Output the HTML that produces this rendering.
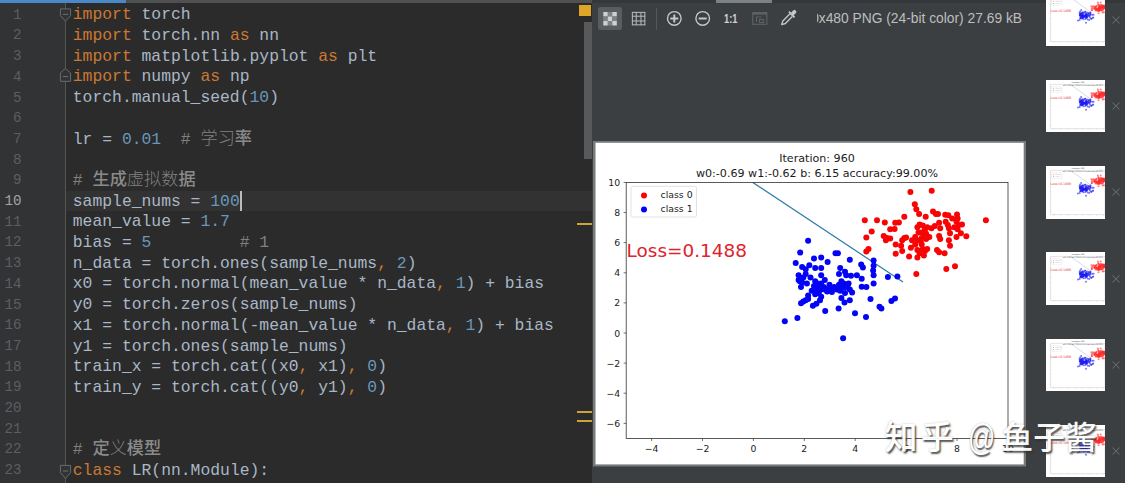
<!DOCTYPE html>
<html lang="zh"><head><meta charset="utf-8"><title>LR</title>
<style>
html,body{margin:0;padding:0;}
body{width:1125px;height:483px;overflow:hidden;background:#2b2b2b;position:relative;font-family:"Liberation Sans","Noto Sans CJK SC",sans-serif;}
#ed{position:absolute;left:0;top:0;width:593px;height:483px;background:#2b2b2b;overflow:hidden;}
#gut{position:absolute;left:0;top:0;width:65px;height:483px;background:#313335;}
#gutline{position:absolute;left:65px;top:0;width:1px;height:483px;background:#555555;}
#curline{position:absolute;left:66px;top:190.5px;width:527px;height:20.7px;background:#323232;}
#topbar{position:absolute;left:0;top:0;width:593px;height:3px;background:#4e5052;}
#topblue{position:absolute;left:0;top:0;width:126px;height:3px;background:#4a88c7;}
.ln{position:absolute;left:0;width:21.5px;text-align:right;font:14.2px/20px "Liberation Mono",monospace;color:#5c5f62;height:20px;white-space:pre;}
.ln.cur{color:#a4a3a3;}
.cl{position:absolute;left:72.8px;font:16.37px/20px "Liberation Mono","Noto Sans CJK SC",monospace;color:#a9b7c6;height:20px;white-space:pre;letter-spacing:0px;}
.k{color:#cc7832;} .n{color:#6897bb;} .c{color:#808080;} .t{color:#a9b7c6;}
.cj,.cjb{position:relative;top:0px;line-height:0;}
.cj{color:#808080;font-family:"Liberation Sans","Noto Sans CJK SC",sans-serif;font-size:17.2px;font-weight:300;}
.cjb{color:#8a8a8a;font-family:"Liberation Sans","Noto Sans CJK SC",sans-serif;font-size:17.2px;font-weight:500;}
#caret{position:absolute;left:239.6px;top:191px;width:2px;height:19.5px;background:#bbbbbb;}
#sb{position:absolute;left:583.6px;top:22px;width:8px;height:137px;background:#58595b;}
#ysq{position:absolute;left:579px;top:5.3px;width:11.8px;height:10.8px;background:#dfa526;}
.mk{position:absolute;left:577px;width:16px;height:2px;background:#c9a53a;}
#wm{position:absolute;left:0;top:0;width:1125px;height:483px;color:#fff;white-space:pre;text-shadow:1.5px 1.5px 1.6px rgba(50,50,50,0.85),0 0 2px rgba(80,80,80,0.35);opacity:0.95;pointer-events:none;font-family:"Liberation Sans","Noto Sans CJK SC",sans-serif;}
#wm span{position:absolute;line-height:44px;height:44px;}
.w1{left:884.5px;top:416.2px;font-weight:500;font-size:33px;letter-spacing:3.3px;}
.w2{left:956px;top:414px;font-size:31px;}
.w3{left:968.3px;top:415.6px;font-weight:400;font-size:36.5px;transform:scaleX(0.74);transform-origin:0 50%;}
.w4{left:1001.5px;top:416px;font-weight:500;font-size:31.7px;}
#panel{position:absolute;left:592px;top:0;width:533px;height:483px;background:#3c3f41;overflow:hidden;}
</style></head><body>
<div id="ed">
<div id="gut"></div><div id="gutline"></div><div id="curline"></div>
<svg width="14" height="483" viewBox="58 0 14 483" style="position:absolute;left:58px;top:0">
<g fill="#313335" stroke="#6a6c6e" stroke-width="1">
<path d="M60.4 8.9H70.6V15.6L65.5 21.2L60.4 15.6Z"/>
<path d="M65.5 68.4L70.6 73V81.3H60.4V73Z"/>
<path d="M60.4 465.4H70.6V472.6L65.5 478.4L60.4 472.6Z"/>
</g>
<path d="M62.8 14.3H68.2M62.8 76.6H68.2M62.8 471H68.2" stroke="#6f7173" stroke-width="1" fill="none"/>
</svg>
<div id="topbar"></div><div id="topblue"></div>
<div class="ln" style="top:4.70px">1</div>
<div class="cl" style="top:5.30px"><span class="k">import</span><span class="t"> torch</span></div>
<div class="ln" style="top:25.40px">2</div>
<div class="cl" style="top:26.00px"><span class="k">import</span><span class="t"> torch.nn </span><span class="k">as</span><span class="t"> nn</span></div>
<div class="ln" style="top:46.10px">3</div>
<div class="cl" style="top:46.70px"><span class="k">import</span><span class="t"> matplotlib.pyplot </span><span class="k">as</span><span class="t"> plt</span></div>
<div class="ln" style="top:66.80px">4</div>
<div class="cl" style="top:67.40px"><span class="k">import</span><span class="t"> numpy </span><span class="k">as</span><span class="t"> np</span></div>
<div class="ln" style="top:87.50px">5</div>
<div class="cl" style="top:88.10px"><span class="t">torch.manual_seed(</span><span class="n">10</span><span class="t">)</span></div>
<div class="ln" style="top:108.20px">6</div>
<div class="ln" style="top:128.90px">7</div>
<div class="cl" style="top:129.50px"><span class="t">lr = </span><span class="n">0.01</span><span class="t">  </span><span class="c"># </span><span class="cj">学习</span><span class="cjb">率</span></div>
<div class="ln" style="top:149.60px">8</div>
<div class="ln" style="top:170.30px">9</div>
<div class="cl" style="top:170.90px"><span class="c"># </span><span class="cjb">生成</span><span class="cj">虚拟数</span><span class="cjb">据</span></div>
<div class="ln cur" style="top:191.00px">10</div>
<div class="cl" style="top:191.60px"><span class="t">sample_nums = </span><span class="n">100</span></div>
<div class="ln" style="top:211.70px">11</div>
<div class="cl" style="top:212.30px"><span class="t">mean_value = </span><span class="n">1.7</span></div>
<div class="ln" style="top:232.40px">12</div>
<div class="cl" style="top:233.00px"><span class="t">bias = </span><span class="n">5</span><span class="t">         </span><span class="c"># 1</span></div>
<div class="ln" style="top:253.10px">13</div>
<div class="cl" style="top:253.70px"><span class="t">n_data = torch.ones(sample_nums</span><span class="k">,</span><span class="t"> </span><span class="n">2</span><span class="t">)</span></div>
<div class="ln" style="top:273.80px">14</div>
<div class="cl" style="top:274.40px"><span class="t">x0 = torch.normal(mean_value * n_data</span><span class="k">,</span><span class="t"> </span><span class="n">1</span><span class="t">) + bias</span></div>
<div class="ln" style="top:294.50px">15</div>
<div class="cl" style="top:295.10px"><span class="t">y0 = torch.zeros(sample_nums)</span></div>
<div class="ln" style="top:315.20px">16</div>
<div class="cl" style="top:315.80px"><span class="t">x1 = torch.normal(-mean_value * n_data</span><span class="k">,</span><span class="t"> </span><span class="n">1</span><span class="t">) + bias</span></div>
<div class="ln" style="top:335.90px">17</div>
<div class="cl" style="top:336.50px"><span class="t">y1 = torch.ones(sample_nums)</span></div>
<div class="ln" style="top:356.60px">18</div>
<div class="cl" style="top:357.20px"><span class="t">train_x = torch.cat((x0</span><span class="k">,</span><span class="t"> x1)</span><span class="k">,</span><span class="t"> </span><span class="n">0</span><span class="t">)</span></div>
<div class="ln" style="top:377.30px">19</div>
<div class="cl" style="top:377.90px"><span class="t">train_y = torch.cat((y0</span><span class="k">,</span><span class="t"> y1)</span><span class="k">,</span><span class="t"> </span><span class="n">0</span><span class="t">)</span></div>
<div class="ln" style="top:398.00px">20</div>
<div class="ln" style="top:418.70px">21</div>
<div class="ln" style="top:439.40px">22</div>
<div class="cl" style="top:440.00px"><span class="c"># </span><span class="cjb">定</span><span class="cj">义</span><span class="cjb">模型</span></div>
<div class="ln" style="top:460.10px">23</div>
<div class="cl" style="top:460.70px"><span class="k">class</span><span class="t"> LR(nn.Module):</span></div>
<div id="caret"></div>
<div id="sb"></div><div id="ysq"></div>
<div class="mk" style="top:223px"></div><div class="mk" style="top:410.7px"></div><div class="mk" style="top:420.2px"></div>
</div>
<div id="panel">
<div style="position:absolute;left:0;top:0;width:533px;height:3px;background:#35383a"></div>
<div style="position:absolute;left:123.5px;top:0;width:56px;height:3px;background:#7c8286"></div>
<div style="position:absolute;left:6.4px;top:7px;width:23.6px;height:23.3px;border-radius:2.5px;background:#5a5d60"></div>
<svg width="240" height="36" viewBox="592 0 240 36" style="position:absolute;left:0;top:0">
<rect x="603.30" y="12.00" width="4.50" height="4.50" fill="#cfd0d1"/>
<rect x="607.80" y="12.00" width="4.50" height="4.50" fill="#7f8284"/>
<rect x="612.30" y="12.00" width="4.50" height="4.50" fill="#cfd0d1"/>
<rect x="603.30" y="16.50" width="4.50" height="4.50" fill="#7f8284"/>
<rect x="607.80" y="16.50" width="4.50" height="4.50" fill="#cfd0d1"/>
<rect x="612.30" y="16.50" width="4.50" height="4.50" fill="#7f8284"/>
<rect x="603.30" y="21.00" width="4.50" height="4.50" fill="#cfd0d1"/>
<rect x="607.80" y="21.00" width="4.50" height="4.50" fill="#7f8284"/>
<rect x="612.30" y="21.00" width="4.50" height="4.50" fill="#cfd0d1"/>
<g stroke="#afb1b3" stroke-width="1.1" fill="none">
<line x1="632.40" y1="11.90" x2="632.40" y2="25.30"/>
<line x1="631.90" y1="12.40" x2="645.30" y2="12.40"/>
<line x1="636.24" y1="11.90" x2="636.24" y2="25.30"/>
<line x1="631.90" y1="16.24" x2="645.30" y2="16.24"/>
<line x1="640.96" y1="11.90" x2="640.96" y2="25.30"/>
<line x1="631.90" y1="20.96" x2="645.30" y2="20.96"/>
<line x1="644.80" y1="11.90" x2="644.80" y2="25.30"/>
<line x1="631.90" y1="24.80" x2="645.30" y2="24.80"/>
</g>
<rect x="656" y="8" width="1" height="22" fill="#56595b"/>
<g stroke="#c4c6c7" fill="none"><circle cx="674.3" cy="18.4" r="6.8" stroke-width="1.4"/><circle cx="702.7" cy="18.4" r="6.8" stroke-width="1.4"/>
<path d="M670.3 18.4H678.3M674.3 14.4V22.4M698.7 18.4H706.7" stroke-width="2"/></g>
<text x="730.7" y="23" font-family="'Liberation Sans',sans-serif" font-weight="bold" font-size="12.4" fill="#cfd0d1" text-anchor="middle" textLength="13.4" lengthAdjust="spacingAndGlyphs">1:1</text>
<g stroke="#5f6264" fill="none" stroke-width="1.1"><rect x="752.8" y="12.7" width="14" height="11.6"/><path d="M752.8 13.6H766.8" stroke-width="2"/><path d="M756.5 22V17H761.5M759.5 19.5H763.5V22.5H759.5Z"/></g>
<g transform="translate(788.5,17.8) rotate(45)" stroke="#c4c6c7" fill="#c4c6c7" stroke-linejoin="round"><rect x="-1.9" y="-10.2" width="3.8" height="5.2" rx="1.6" stroke="none"/><rect x="-4" y="-5.6" width="8" height="2" rx="0.4" stroke="none"/><path d="M-1.8 -3.6V6.2L0 9.6L1.8 6.2V-3.6" fill="none" stroke-width="1.4"/></g>
</svg>
<div style="position:absolute;left:225.2px;top:8px;width:220px;height:22px;overflow:hidden;white-space:pre;font:13.8px/22px 'Liberation Sans',sans-serif;color:#bcbec0"><span style="position:absolute;left:-6.07px;top:0">0x480 PNG (24-bit color) 27.69 kB</span></div>
<svg width="59.2" height="52.5" viewBox="0 0 59.2 52.5" style="position:absolute;left:453.8px;top:-6.6px;background:#fff" font-family="'DejaVu Sans','Liberation Sans',sans-serif">
<path d="M4.6 4.4H59V48.6H4.6Z" fill="none" stroke="#c8c8c8" stroke-width="0.5"/>
<path d="M8.0 48.6v1.2M15.1 48.6v1.2M22.2 48.6v1.2M29.3 48.6v1.2M36.4 48.6v1.2M43.5 48.6v1.2M50.6 48.6v1.2M57.7 48.6v1.2M4.6 6.0h-1M4.6 10.9h-1M4.6 15.8h-1M4.6 20.7h-1M4.6 25.6h-1M4.6 30.5h-1M4.6 35.4h-1M4.6 40.3h-1M4.6 45.2h-1" stroke="#cfcfcf" stroke-width="0.5" fill="none"/>
<path d="M24.5 4.4L46 20" stroke="#9fbccc" stroke-width="0.5"/>
<g fill="#ff2a2a" fill-opacity="0.6"><circle cx="51.8" cy="9.6" r="1.0"/><circle cx="54.7" cy="9.4" r="1.0"/><circle cx="52.4" cy="11.2" r="1.0"/><circle cx="52.6" cy="11.8" r="1.0"/><circle cx="53.0" cy="12.5" r="1.0"/><circle cx="53.9" cy="12.8" r="1.0"/><circle cx="54.9" cy="12.1" r="1.0"/><circle cx="55.6" cy="12.5" r="1.0"/><circle cx="56.6" cy="12.5" r="1.0"/><circle cx="57.0" cy="12.6" r="1.0"/><circle cx="58.2" cy="12.5" r="1.0"/><circle cx="58.3" cy="13.0" r="1.0"/><circle cx="62.2" cy="13.2" r="1.0"/><circle cx="45.4" cy="13.2" r="1.0"/><circle cx="47.1" cy="13.2" r="1.0"/><circle cx="48.2" cy="13.5" r="1.0"/><circle cx="49.7" cy="13.6" r="1.0"/><circle cx="50.2" cy="13.5" r="1.0"/><circle cx="50.9" cy="12.8" r="1.0"/><circle cx="46.4" cy="14.7" r="1.0"/><circle cx="45.7" cy="15.5" r="1.0"/><circle cx="49.0" cy="14.4" r="1.0"/><circle cx="49.6" cy="14.4" r="1.0"/><circle cx="48.1" cy="15.3" r="1.0"/><circle cx="48.5" cy="15.6" r="1.0"/><circle cx="49.0" cy="15.6" r="1.0"/><circle cx="48.4" cy="15.9" r="1.0"/><circle cx="50.9" cy="15.6" r="1.0"/><circle cx="50.6" cy="15.9" r="1.0"/><circle cx="51.2" cy="15.5" r="1.0"/><circle cx="49.7" cy="16.4" r="1.0"/><circle cx="50.5" cy="16.6" r="1.0"/><circle cx="49.7" cy="17.6" r="1.0"/><circle cx="50.6" cy="17.3" r="1.0"/><circle cx="51.6" cy="18.0" r="1.0"/><circle cx="51.8" cy="16.9" r="1.0"/><circle cx="52.4" cy="16.4" r="1.0"/><circle cx="52.7" cy="15.9" r="1.0"/><circle cx="52.4" cy="15.4" r="1.0"/><circle cx="52.9" cy="14.9" r="1.0"/><circle cx="52.7" cy="14.2" r="1.0"/><circle cx="53.0" cy="13.8" r="1.0"/><circle cx="53.5" cy="13.9" r="1.0"/><circle cx="53.8" cy="14.4" r="1.0"/><circle cx="53.9" cy="15.0" r="1.0"/><circle cx="53.6" cy="15.3" r="1.0"/><circle cx="53.3" cy="15.6" r="1.0"/><circle cx="53.9" cy="15.7" r="1.0"/><circle cx="54.4" cy="15.4" r="1.0"/><circle cx="54.1" cy="14.2" r="1.0"/><circle cx="54.7" cy="14.3" r="1.0"/><circle cx="55.1" cy="14.0" r="1.0"/><circle cx="55.7" cy="13.6" r="1.0"/><circle cx="55.9" cy="14.3" r="1.0"/><circle cx="55.7" cy="15.3" r="1.0"/><circle cx="55.9" cy="15.7" r="1.0"/><circle cx="56.6" cy="13.4" r="1.0"/><circle cx="56.9" cy="13.9" r="1.0"/><circle cx="57.1" cy="14.3" r="1.0"/><circle cx="57.2" cy="15.0" r="1.0"/><circle cx="57.1" cy="15.9" r="1.0"/><circle cx="57.2" cy="16.6" r="1.0"/><circle cx="58.1" cy="13.4" r="1.0"/><circle cx="58.4" cy="13.9" r="1.0"/><circle cx="58.9" cy="13.8" r="1.0"/><circle cx="58.3" cy="14.4" r="1.0"/><circle cx="58.7" cy="15.0" r="1.0"/><circle cx="58.1" cy="15.4" r="1.0"/><circle cx="59.5" cy="15.3" r="1.0"/><circle cx="55.4" cy="17.1" r="1.0"/><circle cx="55.7" cy="17.4" r="1.0"/><circle cx="56.5" cy="17.6" r="1.0"/><circle cx="53.3" cy="16.4" r="1.0"/><circle cx="53.5" cy="17.0" r="1.0"/><circle cx="53.8" cy="17.3" r="1.0"/><circle cx="54.1" cy="17.0" r="1.0"/><circle cx="52.7" cy="17.1" r="1.0"/><circle cx="53.0" cy="17.6" r="1.0"/><circle cx="52.7" cy="18.1" r="1.0"/><circle cx="53.6" cy="17.8" r="1.0"/><circle cx="52.6" cy="20.3" r="1.0"/><circle cx="56.7" cy="19.6" r="1.0"/><circle cx="57.9" cy="19.3" r="1.0"/><circle cx="46.0" cy="17.0" r="1.0"/><circle cx="45.7" cy="17.3" r="1.0"/><circle cx="57.5" cy="13.0" r="1.0"/><circle cx="57.8" cy="14.2" r="1.0"/><circle cx="55.3" cy="12.5" r="1.0"/><circle cx="53.3" cy="14.9" r="1.0"/><circle cx="53.2" cy="16.0" r="1.0"/><circle cx="52.0" cy="15.9" r="1.0"/></g>
<g fill="#1c1cf0" fill-opacity="0.6"><circle cx="35.2" cy="17.0" r="1.0"/><circle cx="34.1" cy="18.6" r="1.0"/><circle cx="33.5" cy="19.9" r="1.0"/><circle cx="36.0" cy="19.4" r="1.0"/><circle cx="37.0" cy="19.2" r="1.0"/><circle cx="37.9" cy="19.8" r="1.0"/><circle cx="39.0" cy="18.7" r="1.0"/><circle cx="39.3" cy="18.7" r="1.0"/><circle cx="41.0" cy="19.5" r="1.0"/><circle cx="42.5" cy="20.1" r="1.0"/><circle cx="42.8" cy="20.5" r="1.0"/><circle cx="44.3" cy="19.6" r="1.0"/><circle cx="44.3" cy="20.3" r="1.0"/><circle cx="44.2" cy="20.9" r="1.0"/><circle cx="44.3" cy="21.5" r="1.0"/><circle cx="46.2" cy="21.8" r="1.0"/><circle cx="47.6" cy="21.7" r="1.0"/><circle cx="34.4" cy="20.4" r="1.0"/><circle cx="34.9" cy="20.8" r="1.0"/><circle cx="35.4" cy="20.2" r="1.0"/><circle cx="36.2" cy="20.6" r="1.0"/><circle cx="37.0" cy="20.6" r="1.0"/><circle cx="33.9" cy="21.5" r="1.0"/><circle cx="34.9" cy="21.4" r="1.0"/><circle cx="37.0" cy="21.5" r="1.0"/><circle cx="39.6" cy="20.6" r="1.0"/><circle cx="40.3" cy="21.1" r="1.0"/><circle cx="39.5" cy="21.4" r="1.0"/><circle cx="40.5" cy="21.5" r="1.0"/><circle cx="41.1" cy="21.6" r="1.0"/><circle cx="42.0" cy="21.5" r="1.0"/><circle cx="42.6" cy="22.0" r="1.0"/><circle cx="33.9" cy="22.2" r="1.0"/><circle cx="34.4" cy="22.5" r="1.0"/><circle cx="35.0" cy="22.6" r="1.0"/><circle cx="34.2" cy="23.1" r="1.0"/><circle cx="36.2" cy="22.3" r="1.0"/><circle cx="36.0" cy="22.9" r="1.0"/><circle cx="36.5" cy="23.2" r="1.0"/><circle cx="37.0" cy="23.4" r="1.0"/><circle cx="36.7" cy="23.9" r="1.0"/><circle cx="37.3" cy="23.1" r="1.0"/><circle cx="38.2" cy="22.8" r="1.0"/><circle cx="38.3" cy="23.4" r="1.0"/><circle cx="37.8" cy="23.6" r="1.0"/><circle cx="39.5" cy="22.8" r="1.0"/><circle cx="39.8" cy="22.3" r="1.0"/><circle cx="40.1" cy="22.6" r="1.0"/><circle cx="40.8" cy="22.6" r="1.0"/><circle cx="40.5" cy="23.1" r="1.0"/><circle cx="39.8" cy="23.2" r="1.0"/><circle cx="41.0" cy="23.4" r="1.0"/><circle cx="41.3" cy="23.8" r="1.0"/><circle cx="40.3" cy="23.9" r="1.0"/><circle cx="39.8" cy="24.5" r="1.0"/><circle cx="42.6" cy="23.0" r="1.0"/><circle cx="43.3" cy="23.1" r="1.0"/><circle cx="44.3" cy="22.6" r="1.0"/><circle cx="35.2" cy="24.2" r="1.0"/><circle cx="37.0" cy="24.3" r="1.0"/><circle cx="36.8" cy="24.8" r="1.0"/><circle cx="36.4" cy="25.3" r="1.0"/><circle cx="35.9" cy="25.5" r="1.0"/><circle cx="34.9" cy="24.8" r="1.0"/><circle cx="34.2" cy="25.2" r="1.0"/><circle cx="40.2" cy="25.1" r="1.0"/><circle cx="41.0" cy="24.8" r="1.0"/><circle cx="43.8" cy="24.6" r="1.0"/><circle cx="46.7" cy="24.9" r="1.0"/><circle cx="47.2" cy="24.6" r="1.0"/><circle cx="45.1" cy="25.6" r="1.0"/><circle cx="45.3" cy="25.9" r="1.0"/><circle cx="37.6" cy="26.2" r="1.0"/><circle cx="39.4" cy="25.9" r="1.0"/><circle cx="41.7" cy="26.5" r="1.0"/><circle cx="43.2" cy="27.0" r="1.0"/><circle cx="33.7" cy="27.1" r="1.0"/><circle cx="32.0" cy="27.5" r="1.0"/><circle cx="40.0" cy="29.8" r="1.0"/><circle cx="38.8" cy="23.1" r="1.0"/><circle cx="39.2" cy="23.4" r="1.0"/><circle cx="35.5" cy="21.8" r="1.0"/><circle cx="37.5" cy="22.2" r="1.0"/><circle cx="38.5" cy="23.7" r="1.0"/><circle cx="37.0" cy="22.6" r="1.0"/><circle cx="34.5" cy="21.8" r="1.0"/><circle cx="35.7" cy="23.6" r="1.0"/><circle cx="36.2" cy="24.0" r="1.0"/><circle cx="36.5" cy="22.6" r="1.0"/><circle cx="36.8" cy="23.1" r="1.0"/><circle cx="36.4" cy="23.6" r="1.0"/><circle cx="37.5" cy="23.4" r="1.0"/><circle cx="38.0" cy="23.2" r="1.0"/><circle cx="39.8" cy="22.8" r="1.0"/><circle cx="40.1" cy="23.1" r="1.0"/><circle cx="40.6" cy="22.9" r="1.0"/><circle cx="39.6" cy="23.6" r="1.0"/><circle cx="34.0" cy="22.3" r="1.0"/><circle cx="35.2" cy="24.6" r="1.0"/><circle cx="34.5" cy="25.0" r="1.0"/></g>
<text x="32" y="3.3" font-size="1.9" fill="#333" text-anchor="middle">Iteration: 960</text>
<text x="37" y="5.6" font-size="1.9" fill="#333" text-anchor="middle" textLength="40">w0:-0.69 w1:-0.62 b: 6.15 accuracy:99.00%</text>
<text x="4.6" y="18.6" font-size="3.4" fill="#e84545" textLength="20.5">Loss=0.1488</text>
<rect x="5.6" y="6.9" width="10.4" height="5.4" rx="0.4" fill="none" stroke="#dedede" stroke-width="0.4"/>
<circle cx="7.6" cy="8.5" r="0.5" fill="#f88"/><circle cx="7.6" cy="10.6" r="0.5" fill="#88f"/>
<text x="9.5" y="9.1" font-size="1.6" fill="#999">class 0</text><text x="9.5" y="11.2" font-size="1.6" fill="#999">class 1</text>
</svg>
<svg width="10" height="10" viewBox="0 0 10 10" style="position:absolute;left:519.2px;top:14.7px"><path d="M1.5 1.5L8.5 8.5M8.5 1.5L1.5 8.5" stroke="#696c6e" stroke-width="1.05" fill="none"/></svg>
<svg width="59.2" height="52.5" viewBox="0 0 59.2 52.5" style="position:absolute;left:453.8px;top:79.7px;background:#fff" font-family="'DejaVu Sans','Liberation Sans',sans-serif">
<path d="M4.6 4.4H59V48.6H4.6Z" fill="none" stroke="#c8c8c8" stroke-width="0.5"/>
<path d="M8.0 48.6v1.2M15.1 48.6v1.2M22.2 48.6v1.2M29.3 48.6v1.2M36.4 48.6v1.2M43.5 48.6v1.2M50.6 48.6v1.2M57.7 48.6v1.2M4.6 6.0h-1M4.6 10.9h-1M4.6 15.8h-1M4.6 20.7h-1M4.6 25.6h-1M4.6 30.5h-1M4.6 35.4h-1M4.6 40.3h-1M4.6 45.2h-1" stroke="#cfcfcf" stroke-width="0.5" fill="none"/>
<path d="M24.5 4.4L46 20" stroke="#9fbccc" stroke-width="0.5"/>
<g fill="#ff2a2a" fill-opacity="0.6"><circle cx="51.8" cy="9.6" r="1.0"/><circle cx="54.7" cy="9.4" r="1.0"/><circle cx="52.4" cy="11.2" r="1.0"/><circle cx="52.6" cy="11.8" r="1.0"/><circle cx="53.0" cy="12.5" r="1.0"/><circle cx="53.9" cy="12.8" r="1.0"/><circle cx="54.9" cy="12.1" r="1.0"/><circle cx="55.6" cy="12.5" r="1.0"/><circle cx="56.6" cy="12.5" r="1.0"/><circle cx="57.0" cy="12.6" r="1.0"/><circle cx="58.2" cy="12.5" r="1.0"/><circle cx="58.3" cy="13.0" r="1.0"/><circle cx="62.2" cy="13.2" r="1.0"/><circle cx="45.4" cy="13.2" r="1.0"/><circle cx="47.1" cy="13.2" r="1.0"/><circle cx="48.2" cy="13.5" r="1.0"/><circle cx="49.7" cy="13.6" r="1.0"/><circle cx="50.2" cy="13.5" r="1.0"/><circle cx="50.9" cy="12.8" r="1.0"/><circle cx="46.4" cy="14.7" r="1.0"/><circle cx="45.7" cy="15.5" r="1.0"/><circle cx="49.0" cy="14.4" r="1.0"/><circle cx="49.6" cy="14.4" r="1.0"/><circle cx="48.1" cy="15.3" r="1.0"/><circle cx="48.5" cy="15.6" r="1.0"/><circle cx="49.0" cy="15.6" r="1.0"/><circle cx="48.4" cy="15.9" r="1.0"/><circle cx="50.9" cy="15.6" r="1.0"/><circle cx="50.6" cy="15.9" r="1.0"/><circle cx="51.2" cy="15.5" r="1.0"/><circle cx="49.7" cy="16.4" r="1.0"/><circle cx="50.5" cy="16.6" r="1.0"/><circle cx="49.7" cy="17.6" r="1.0"/><circle cx="50.6" cy="17.3" r="1.0"/><circle cx="51.6" cy="18.0" r="1.0"/><circle cx="51.8" cy="16.9" r="1.0"/><circle cx="52.4" cy="16.4" r="1.0"/><circle cx="52.7" cy="15.9" r="1.0"/><circle cx="52.4" cy="15.4" r="1.0"/><circle cx="52.9" cy="14.9" r="1.0"/><circle cx="52.7" cy="14.2" r="1.0"/><circle cx="53.0" cy="13.8" r="1.0"/><circle cx="53.5" cy="13.9" r="1.0"/><circle cx="53.8" cy="14.4" r="1.0"/><circle cx="53.9" cy="15.0" r="1.0"/><circle cx="53.6" cy="15.3" r="1.0"/><circle cx="53.3" cy="15.6" r="1.0"/><circle cx="53.9" cy="15.7" r="1.0"/><circle cx="54.4" cy="15.4" r="1.0"/><circle cx="54.1" cy="14.2" r="1.0"/><circle cx="54.7" cy="14.3" r="1.0"/><circle cx="55.1" cy="14.0" r="1.0"/><circle cx="55.7" cy="13.6" r="1.0"/><circle cx="55.9" cy="14.3" r="1.0"/><circle cx="55.7" cy="15.3" r="1.0"/><circle cx="55.9" cy="15.7" r="1.0"/><circle cx="56.6" cy="13.4" r="1.0"/><circle cx="56.9" cy="13.9" r="1.0"/><circle cx="57.1" cy="14.3" r="1.0"/><circle cx="57.2" cy="15.0" r="1.0"/><circle cx="57.1" cy="15.9" r="1.0"/><circle cx="57.2" cy="16.6" r="1.0"/><circle cx="58.1" cy="13.4" r="1.0"/><circle cx="58.4" cy="13.9" r="1.0"/><circle cx="58.9" cy="13.8" r="1.0"/><circle cx="58.3" cy="14.4" r="1.0"/><circle cx="58.7" cy="15.0" r="1.0"/><circle cx="58.1" cy="15.4" r="1.0"/><circle cx="59.5" cy="15.3" r="1.0"/><circle cx="55.4" cy="17.1" r="1.0"/><circle cx="55.7" cy="17.4" r="1.0"/><circle cx="56.5" cy="17.6" r="1.0"/><circle cx="53.3" cy="16.4" r="1.0"/><circle cx="53.5" cy="17.0" r="1.0"/><circle cx="53.8" cy="17.3" r="1.0"/><circle cx="54.1" cy="17.0" r="1.0"/><circle cx="52.7" cy="17.1" r="1.0"/><circle cx="53.0" cy="17.6" r="1.0"/><circle cx="52.7" cy="18.1" r="1.0"/><circle cx="53.6" cy="17.8" r="1.0"/><circle cx="52.6" cy="20.3" r="1.0"/><circle cx="56.7" cy="19.6" r="1.0"/><circle cx="57.9" cy="19.3" r="1.0"/><circle cx="46.0" cy="17.0" r="1.0"/><circle cx="45.7" cy="17.3" r="1.0"/><circle cx="57.5" cy="13.0" r="1.0"/><circle cx="57.8" cy="14.2" r="1.0"/><circle cx="55.3" cy="12.5" r="1.0"/><circle cx="53.3" cy="14.9" r="1.0"/><circle cx="53.2" cy="16.0" r="1.0"/><circle cx="52.0" cy="15.9" r="1.0"/></g>
<g fill="#1c1cf0" fill-opacity="0.6"><circle cx="35.2" cy="17.0" r="1.0"/><circle cx="34.1" cy="18.6" r="1.0"/><circle cx="33.5" cy="19.9" r="1.0"/><circle cx="36.0" cy="19.4" r="1.0"/><circle cx="37.0" cy="19.2" r="1.0"/><circle cx="37.9" cy="19.8" r="1.0"/><circle cx="39.0" cy="18.7" r="1.0"/><circle cx="39.3" cy="18.7" r="1.0"/><circle cx="41.0" cy="19.5" r="1.0"/><circle cx="42.5" cy="20.1" r="1.0"/><circle cx="42.8" cy="20.5" r="1.0"/><circle cx="44.3" cy="19.6" r="1.0"/><circle cx="44.3" cy="20.3" r="1.0"/><circle cx="44.2" cy="20.9" r="1.0"/><circle cx="44.3" cy="21.5" r="1.0"/><circle cx="46.2" cy="21.8" r="1.0"/><circle cx="47.6" cy="21.7" r="1.0"/><circle cx="34.4" cy="20.4" r="1.0"/><circle cx="34.9" cy="20.8" r="1.0"/><circle cx="35.4" cy="20.2" r="1.0"/><circle cx="36.2" cy="20.6" r="1.0"/><circle cx="37.0" cy="20.6" r="1.0"/><circle cx="33.9" cy="21.5" r="1.0"/><circle cx="34.9" cy="21.4" r="1.0"/><circle cx="37.0" cy="21.5" r="1.0"/><circle cx="39.6" cy="20.6" r="1.0"/><circle cx="40.3" cy="21.1" r="1.0"/><circle cx="39.5" cy="21.4" r="1.0"/><circle cx="40.5" cy="21.5" r="1.0"/><circle cx="41.1" cy="21.6" r="1.0"/><circle cx="42.0" cy="21.5" r="1.0"/><circle cx="42.6" cy="22.0" r="1.0"/><circle cx="33.9" cy="22.2" r="1.0"/><circle cx="34.4" cy="22.5" r="1.0"/><circle cx="35.0" cy="22.6" r="1.0"/><circle cx="34.2" cy="23.1" r="1.0"/><circle cx="36.2" cy="22.3" r="1.0"/><circle cx="36.0" cy="22.9" r="1.0"/><circle cx="36.5" cy="23.2" r="1.0"/><circle cx="37.0" cy="23.4" r="1.0"/><circle cx="36.7" cy="23.9" r="1.0"/><circle cx="37.3" cy="23.1" r="1.0"/><circle cx="38.2" cy="22.8" r="1.0"/><circle cx="38.3" cy="23.4" r="1.0"/><circle cx="37.8" cy="23.6" r="1.0"/><circle cx="39.5" cy="22.8" r="1.0"/><circle cx="39.8" cy="22.3" r="1.0"/><circle cx="40.1" cy="22.6" r="1.0"/><circle cx="40.8" cy="22.6" r="1.0"/><circle cx="40.5" cy="23.1" r="1.0"/><circle cx="39.8" cy="23.2" r="1.0"/><circle cx="41.0" cy="23.4" r="1.0"/><circle cx="41.3" cy="23.8" r="1.0"/><circle cx="40.3" cy="23.9" r="1.0"/><circle cx="39.8" cy="24.5" r="1.0"/><circle cx="42.6" cy="23.0" r="1.0"/><circle cx="43.3" cy="23.1" r="1.0"/><circle cx="44.3" cy="22.6" r="1.0"/><circle cx="35.2" cy="24.2" r="1.0"/><circle cx="37.0" cy="24.3" r="1.0"/><circle cx="36.8" cy="24.8" r="1.0"/><circle cx="36.4" cy="25.3" r="1.0"/><circle cx="35.9" cy="25.5" r="1.0"/><circle cx="34.9" cy="24.8" r="1.0"/><circle cx="34.2" cy="25.2" r="1.0"/><circle cx="40.2" cy="25.1" r="1.0"/><circle cx="41.0" cy="24.8" r="1.0"/><circle cx="43.8" cy="24.6" r="1.0"/><circle cx="46.7" cy="24.9" r="1.0"/><circle cx="47.2" cy="24.6" r="1.0"/><circle cx="45.1" cy="25.6" r="1.0"/><circle cx="45.3" cy="25.9" r="1.0"/><circle cx="37.6" cy="26.2" r="1.0"/><circle cx="39.4" cy="25.9" r="1.0"/><circle cx="41.7" cy="26.5" r="1.0"/><circle cx="43.2" cy="27.0" r="1.0"/><circle cx="33.7" cy="27.1" r="1.0"/><circle cx="32.0" cy="27.5" r="1.0"/><circle cx="40.0" cy="29.8" r="1.0"/><circle cx="38.8" cy="23.1" r="1.0"/><circle cx="39.2" cy="23.4" r="1.0"/><circle cx="35.5" cy="21.8" r="1.0"/><circle cx="37.5" cy="22.2" r="1.0"/><circle cx="38.5" cy="23.7" r="1.0"/><circle cx="37.0" cy="22.6" r="1.0"/><circle cx="34.5" cy="21.8" r="1.0"/><circle cx="35.7" cy="23.6" r="1.0"/><circle cx="36.2" cy="24.0" r="1.0"/><circle cx="36.5" cy="22.6" r="1.0"/><circle cx="36.8" cy="23.1" r="1.0"/><circle cx="36.4" cy="23.6" r="1.0"/><circle cx="37.5" cy="23.4" r="1.0"/><circle cx="38.0" cy="23.2" r="1.0"/><circle cx="39.8" cy="22.8" r="1.0"/><circle cx="40.1" cy="23.1" r="1.0"/><circle cx="40.6" cy="22.9" r="1.0"/><circle cx="39.6" cy="23.6" r="1.0"/><circle cx="34.0" cy="22.3" r="1.0"/><circle cx="35.2" cy="24.6" r="1.0"/><circle cx="34.5" cy="25.0" r="1.0"/></g>
<text x="32" y="3.3" font-size="1.9" fill="#333" text-anchor="middle">Iteration: 960</text>
<text x="37" y="5.6" font-size="1.9" fill="#333" text-anchor="middle" textLength="40">w0:-0.69 w1:-0.62 b: 6.15 accuracy:99.00%</text>
<text x="4.6" y="18.6" font-size="3.4" fill="#e84545" textLength="20.5">Loss=0.1488</text>
<rect x="5.6" y="6.9" width="10.4" height="5.4" rx="0.4" fill="none" stroke="#dedede" stroke-width="0.4"/>
<circle cx="7.6" cy="8.5" r="0.5" fill="#f88"/><circle cx="7.6" cy="10.6" r="0.5" fill="#88f"/>
<text x="9.5" y="9.1" font-size="1.6" fill="#999">class 0</text><text x="9.5" y="11.2" font-size="1.6" fill="#999">class 1</text>
</svg>
<svg width="10" height="10" viewBox="0 0 10 10" style="position:absolute;left:519.2px;top:101.0px"><path d="M1.5 1.5L8.5 8.5M8.5 1.5L1.5 8.5" stroke="#696c6e" stroke-width="1.05" fill="none"/></svg>
<svg width="59.2" height="52.5" viewBox="0 0 59.2 52.5" style="position:absolute;left:453.8px;top:166.0px;background:#fff" font-family="'DejaVu Sans','Liberation Sans',sans-serif">
<path d="M4.6 4.4H59V48.6H4.6Z" fill="none" stroke="#c8c8c8" stroke-width="0.5"/>
<path d="M8.0 48.6v1.2M15.1 48.6v1.2M22.2 48.6v1.2M29.3 48.6v1.2M36.4 48.6v1.2M43.5 48.6v1.2M50.6 48.6v1.2M57.7 48.6v1.2M4.6 6.0h-1M4.6 10.9h-1M4.6 15.8h-1M4.6 20.7h-1M4.6 25.6h-1M4.6 30.5h-1M4.6 35.4h-1M4.6 40.3h-1M4.6 45.2h-1" stroke="#cfcfcf" stroke-width="0.5" fill="none"/>
<path d="M24.5 4.4L46 20" stroke="#9fbccc" stroke-width="0.5"/>
<g fill="#ff2a2a" fill-opacity="0.6"><circle cx="51.8" cy="9.6" r="1.0"/><circle cx="54.7" cy="9.4" r="1.0"/><circle cx="52.4" cy="11.2" r="1.0"/><circle cx="52.6" cy="11.8" r="1.0"/><circle cx="53.0" cy="12.5" r="1.0"/><circle cx="53.9" cy="12.8" r="1.0"/><circle cx="54.9" cy="12.1" r="1.0"/><circle cx="55.6" cy="12.5" r="1.0"/><circle cx="56.6" cy="12.5" r="1.0"/><circle cx="57.0" cy="12.6" r="1.0"/><circle cx="58.2" cy="12.5" r="1.0"/><circle cx="58.3" cy="13.0" r="1.0"/><circle cx="62.2" cy="13.2" r="1.0"/><circle cx="45.4" cy="13.2" r="1.0"/><circle cx="47.1" cy="13.2" r="1.0"/><circle cx="48.2" cy="13.5" r="1.0"/><circle cx="49.7" cy="13.6" r="1.0"/><circle cx="50.2" cy="13.5" r="1.0"/><circle cx="50.9" cy="12.8" r="1.0"/><circle cx="46.4" cy="14.7" r="1.0"/><circle cx="45.7" cy="15.5" r="1.0"/><circle cx="49.0" cy="14.4" r="1.0"/><circle cx="49.6" cy="14.4" r="1.0"/><circle cx="48.1" cy="15.3" r="1.0"/><circle cx="48.5" cy="15.6" r="1.0"/><circle cx="49.0" cy="15.6" r="1.0"/><circle cx="48.4" cy="15.9" r="1.0"/><circle cx="50.9" cy="15.6" r="1.0"/><circle cx="50.6" cy="15.9" r="1.0"/><circle cx="51.2" cy="15.5" r="1.0"/><circle cx="49.7" cy="16.4" r="1.0"/><circle cx="50.5" cy="16.6" r="1.0"/><circle cx="49.7" cy="17.6" r="1.0"/><circle cx="50.6" cy="17.3" r="1.0"/><circle cx="51.6" cy="18.0" r="1.0"/><circle cx="51.8" cy="16.9" r="1.0"/><circle cx="52.4" cy="16.4" r="1.0"/><circle cx="52.7" cy="15.9" r="1.0"/><circle cx="52.4" cy="15.4" r="1.0"/><circle cx="52.9" cy="14.9" r="1.0"/><circle cx="52.7" cy="14.2" r="1.0"/><circle cx="53.0" cy="13.8" r="1.0"/><circle cx="53.5" cy="13.9" r="1.0"/><circle cx="53.8" cy="14.4" r="1.0"/><circle cx="53.9" cy="15.0" r="1.0"/><circle cx="53.6" cy="15.3" r="1.0"/><circle cx="53.3" cy="15.6" r="1.0"/><circle cx="53.9" cy="15.7" r="1.0"/><circle cx="54.4" cy="15.4" r="1.0"/><circle cx="54.1" cy="14.2" r="1.0"/><circle cx="54.7" cy="14.3" r="1.0"/><circle cx="55.1" cy="14.0" r="1.0"/><circle cx="55.7" cy="13.6" r="1.0"/><circle cx="55.9" cy="14.3" r="1.0"/><circle cx="55.7" cy="15.3" r="1.0"/><circle cx="55.9" cy="15.7" r="1.0"/><circle cx="56.6" cy="13.4" r="1.0"/><circle cx="56.9" cy="13.9" r="1.0"/><circle cx="57.1" cy="14.3" r="1.0"/><circle cx="57.2" cy="15.0" r="1.0"/><circle cx="57.1" cy="15.9" r="1.0"/><circle cx="57.2" cy="16.6" r="1.0"/><circle cx="58.1" cy="13.4" r="1.0"/><circle cx="58.4" cy="13.9" r="1.0"/><circle cx="58.9" cy="13.8" r="1.0"/><circle cx="58.3" cy="14.4" r="1.0"/><circle cx="58.7" cy="15.0" r="1.0"/><circle cx="58.1" cy="15.4" r="1.0"/><circle cx="59.5" cy="15.3" r="1.0"/><circle cx="55.4" cy="17.1" r="1.0"/><circle cx="55.7" cy="17.4" r="1.0"/><circle cx="56.5" cy="17.6" r="1.0"/><circle cx="53.3" cy="16.4" r="1.0"/><circle cx="53.5" cy="17.0" r="1.0"/><circle cx="53.8" cy="17.3" r="1.0"/><circle cx="54.1" cy="17.0" r="1.0"/><circle cx="52.7" cy="17.1" r="1.0"/><circle cx="53.0" cy="17.6" r="1.0"/><circle cx="52.7" cy="18.1" r="1.0"/><circle cx="53.6" cy="17.8" r="1.0"/><circle cx="52.6" cy="20.3" r="1.0"/><circle cx="56.7" cy="19.6" r="1.0"/><circle cx="57.9" cy="19.3" r="1.0"/><circle cx="46.0" cy="17.0" r="1.0"/><circle cx="45.7" cy="17.3" r="1.0"/><circle cx="57.5" cy="13.0" r="1.0"/><circle cx="57.8" cy="14.2" r="1.0"/><circle cx="55.3" cy="12.5" r="1.0"/><circle cx="53.3" cy="14.9" r="1.0"/><circle cx="53.2" cy="16.0" r="1.0"/><circle cx="52.0" cy="15.9" r="1.0"/></g>
<g fill="#1c1cf0" fill-opacity="0.6"><circle cx="35.2" cy="17.0" r="1.0"/><circle cx="34.1" cy="18.6" r="1.0"/><circle cx="33.5" cy="19.9" r="1.0"/><circle cx="36.0" cy="19.4" r="1.0"/><circle cx="37.0" cy="19.2" r="1.0"/><circle cx="37.9" cy="19.8" r="1.0"/><circle cx="39.0" cy="18.7" r="1.0"/><circle cx="39.3" cy="18.7" r="1.0"/><circle cx="41.0" cy="19.5" r="1.0"/><circle cx="42.5" cy="20.1" r="1.0"/><circle cx="42.8" cy="20.5" r="1.0"/><circle cx="44.3" cy="19.6" r="1.0"/><circle cx="44.3" cy="20.3" r="1.0"/><circle cx="44.2" cy="20.9" r="1.0"/><circle cx="44.3" cy="21.5" r="1.0"/><circle cx="46.2" cy="21.8" r="1.0"/><circle cx="47.6" cy="21.7" r="1.0"/><circle cx="34.4" cy="20.4" r="1.0"/><circle cx="34.9" cy="20.8" r="1.0"/><circle cx="35.4" cy="20.2" r="1.0"/><circle cx="36.2" cy="20.6" r="1.0"/><circle cx="37.0" cy="20.6" r="1.0"/><circle cx="33.9" cy="21.5" r="1.0"/><circle cx="34.9" cy="21.4" r="1.0"/><circle cx="37.0" cy="21.5" r="1.0"/><circle cx="39.6" cy="20.6" r="1.0"/><circle cx="40.3" cy="21.1" r="1.0"/><circle cx="39.5" cy="21.4" r="1.0"/><circle cx="40.5" cy="21.5" r="1.0"/><circle cx="41.1" cy="21.6" r="1.0"/><circle cx="42.0" cy="21.5" r="1.0"/><circle cx="42.6" cy="22.0" r="1.0"/><circle cx="33.9" cy="22.2" r="1.0"/><circle cx="34.4" cy="22.5" r="1.0"/><circle cx="35.0" cy="22.6" r="1.0"/><circle cx="34.2" cy="23.1" r="1.0"/><circle cx="36.2" cy="22.3" r="1.0"/><circle cx="36.0" cy="22.9" r="1.0"/><circle cx="36.5" cy="23.2" r="1.0"/><circle cx="37.0" cy="23.4" r="1.0"/><circle cx="36.7" cy="23.9" r="1.0"/><circle cx="37.3" cy="23.1" r="1.0"/><circle cx="38.2" cy="22.8" r="1.0"/><circle cx="38.3" cy="23.4" r="1.0"/><circle cx="37.8" cy="23.6" r="1.0"/><circle cx="39.5" cy="22.8" r="1.0"/><circle cx="39.8" cy="22.3" r="1.0"/><circle cx="40.1" cy="22.6" r="1.0"/><circle cx="40.8" cy="22.6" r="1.0"/><circle cx="40.5" cy="23.1" r="1.0"/><circle cx="39.8" cy="23.2" r="1.0"/><circle cx="41.0" cy="23.4" r="1.0"/><circle cx="41.3" cy="23.8" r="1.0"/><circle cx="40.3" cy="23.9" r="1.0"/><circle cx="39.8" cy="24.5" r="1.0"/><circle cx="42.6" cy="23.0" r="1.0"/><circle cx="43.3" cy="23.1" r="1.0"/><circle cx="44.3" cy="22.6" r="1.0"/><circle cx="35.2" cy="24.2" r="1.0"/><circle cx="37.0" cy="24.3" r="1.0"/><circle cx="36.8" cy="24.8" r="1.0"/><circle cx="36.4" cy="25.3" r="1.0"/><circle cx="35.9" cy="25.5" r="1.0"/><circle cx="34.9" cy="24.8" r="1.0"/><circle cx="34.2" cy="25.2" r="1.0"/><circle cx="40.2" cy="25.1" r="1.0"/><circle cx="41.0" cy="24.8" r="1.0"/><circle cx="43.8" cy="24.6" r="1.0"/><circle cx="46.7" cy="24.9" r="1.0"/><circle cx="47.2" cy="24.6" r="1.0"/><circle cx="45.1" cy="25.6" r="1.0"/><circle cx="45.3" cy="25.9" r="1.0"/><circle cx="37.6" cy="26.2" r="1.0"/><circle cx="39.4" cy="25.9" r="1.0"/><circle cx="41.7" cy="26.5" r="1.0"/><circle cx="43.2" cy="27.0" r="1.0"/><circle cx="33.7" cy="27.1" r="1.0"/><circle cx="32.0" cy="27.5" r="1.0"/><circle cx="40.0" cy="29.8" r="1.0"/><circle cx="38.8" cy="23.1" r="1.0"/><circle cx="39.2" cy="23.4" r="1.0"/><circle cx="35.5" cy="21.8" r="1.0"/><circle cx="37.5" cy="22.2" r="1.0"/><circle cx="38.5" cy="23.7" r="1.0"/><circle cx="37.0" cy="22.6" r="1.0"/><circle cx="34.5" cy="21.8" r="1.0"/><circle cx="35.7" cy="23.6" r="1.0"/><circle cx="36.2" cy="24.0" r="1.0"/><circle cx="36.5" cy="22.6" r="1.0"/><circle cx="36.8" cy="23.1" r="1.0"/><circle cx="36.4" cy="23.6" r="1.0"/><circle cx="37.5" cy="23.4" r="1.0"/><circle cx="38.0" cy="23.2" r="1.0"/><circle cx="39.8" cy="22.8" r="1.0"/><circle cx="40.1" cy="23.1" r="1.0"/><circle cx="40.6" cy="22.9" r="1.0"/><circle cx="39.6" cy="23.6" r="1.0"/><circle cx="34.0" cy="22.3" r="1.0"/><circle cx="35.2" cy="24.6" r="1.0"/><circle cx="34.5" cy="25.0" r="1.0"/></g>
<text x="32" y="3.3" font-size="1.9" fill="#333" text-anchor="middle">Iteration: 960</text>
<text x="37" y="5.6" font-size="1.9" fill="#333" text-anchor="middle" textLength="40">w0:-0.69 w1:-0.62 b: 6.15 accuracy:99.00%</text>
<text x="4.6" y="18.6" font-size="3.4" fill="#e84545" textLength="20.5">Loss=0.1488</text>
<rect x="5.6" y="6.9" width="10.4" height="5.4" rx="0.4" fill="none" stroke="#dedede" stroke-width="0.4"/>
<circle cx="7.6" cy="8.5" r="0.5" fill="#f88"/><circle cx="7.6" cy="10.6" r="0.5" fill="#88f"/>
<text x="9.5" y="9.1" font-size="1.6" fill="#999">class 0</text><text x="9.5" y="11.2" font-size="1.6" fill="#999">class 1</text>
</svg>
<svg width="10" height="10" viewBox="0 0 10 10" style="position:absolute;left:519.2px;top:187.2px"><path d="M1.5 1.5L8.5 8.5M8.5 1.5L1.5 8.5" stroke="#696c6e" stroke-width="1.05" fill="none"/></svg>
<svg width="59.2" height="52.5" viewBox="0 0 59.2 52.5" style="position:absolute;left:453.8px;top:252.3px;background:#fff" font-family="'DejaVu Sans','Liberation Sans',sans-serif">
<path d="M4.6 4.4H59V48.6H4.6Z" fill="none" stroke="#c8c8c8" stroke-width="0.5"/>
<path d="M8.0 48.6v1.2M15.1 48.6v1.2M22.2 48.6v1.2M29.3 48.6v1.2M36.4 48.6v1.2M43.5 48.6v1.2M50.6 48.6v1.2M57.7 48.6v1.2M4.6 6.0h-1M4.6 10.9h-1M4.6 15.8h-1M4.6 20.7h-1M4.6 25.6h-1M4.6 30.5h-1M4.6 35.4h-1M4.6 40.3h-1M4.6 45.2h-1" stroke="#cfcfcf" stroke-width="0.5" fill="none"/>
<path d="M24.5 4.4L46 20" stroke="#9fbccc" stroke-width="0.5"/>
<g fill="#ff2a2a" fill-opacity="0.6"><circle cx="51.8" cy="9.6" r="1.0"/><circle cx="54.7" cy="9.4" r="1.0"/><circle cx="52.4" cy="11.2" r="1.0"/><circle cx="52.6" cy="11.8" r="1.0"/><circle cx="53.0" cy="12.5" r="1.0"/><circle cx="53.9" cy="12.8" r="1.0"/><circle cx="54.9" cy="12.1" r="1.0"/><circle cx="55.6" cy="12.5" r="1.0"/><circle cx="56.6" cy="12.5" r="1.0"/><circle cx="57.0" cy="12.6" r="1.0"/><circle cx="58.2" cy="12.5" r="1.0"/><circle cx="58.3" cy="13.0" r="1.0"/><circle cx="62.2" cy="13.2" r="1.0"/><circle cx="45.4" cy="13.2" r="1.0"/><circle cx="47.1" cy="13.2" r="1.0"/><circle cx="48.2" cy="13.5" r="1.0"/><circle cx="49.7" cy="13.6" r="1.0"/><circle cx="50.2" cy="13.5" r="1.0"/><circle cx="50.9" cy="12.8" r="1.0"/><circle cx="46.4" cy="14.7" r="1.0"/><circle cx="45.7" cy="15.5" r="1.0"/><circle cx="49.0" cy="14.4" r="1.0"/><circle cx="49.6" cy="14.4" r="1.0"/><circle cx="48.1" cy="15.3" r="1.0"/><circle cx="48.5" cy="15.6" r="1.0"/><circle cx="49.0" cy="15.6" r="1.0"/><circle cx="48.4" cy="15.9" r="1.0"/><circle cx="50.9" cy="15.6" r="1.0"/><circle cx="50.6" cy="15.9" r="1.0"/><circle cx="51.2" cy="15.5" r="1.0"/><circle cx="49.7" cy="16.4" r="1.0"/><circle cx="50.5" cy="16.6" r="1.0"/><circle cx="49.7" cy="17.6" r="1.0"/><circle cx="50.6" cy="17.3" r="1.0"/><circle cx="51.6" cy="18.0" r="1.0"/><circle cx="51.8" cy="16.9" r="1.0"/><circle cx="52.4" cy="16.4" r="1.0"/><circle cx="52.7" cy="15.9" r="1.0"/><circle cx="52.4" cy="15.4" r="1.0"/><circle cx="52.9" cy="14.9" r="1.0"/><circle cx="52.7" cy="14.2" r="1.0"/><circle cx="53.0" cy="13.8" r="1.0"/><circle cx="53.5" cy="13.9" r="1.0"/><circle cx="53.8" cy="14.4" r="1.0"/><circle cx="53.9" cy="15.0" r="1.0"/><circle cx="53.6" cy="15.3" r="1.0"/><circle cx="53.3" cy="15.6" r="1.0"/><circle cx="53.9" cy="15.7" r="1.0"/><circle cx="54.4" cy="15.4" r="1.0"/><circle cx="54.1" cy="14.2" r="1.0"/><circle cx="54.7" cy="14.3" r="1.0"/><circle cx="55.1" cy="14.0" r="1.0"/><circle cx="55.7" cy="13.6" r="1.0"/><circle cx="55.9" cy="14.3" r="1.0"/><circle cx="55.7" cy="15.3" r="1.0"/><circle cx="55.9" cy="15.7" r="1.0"/><circle cx="56.6" cy="13.4" r="1.0"/><circle cx="56.9" cy="13.9" r="1.0"/><circle cx="57.1" cy="14.3" r="1.0"/><circle cx="57.2" cy="15.0" r="1.0"/><circle cx="57.1" cy="15.9" r="1.0"/><circle cx="57.2" cy="16.6" r="1.0"/><circle cx="58.1" cy="13.4" r="1.0"/><circle cx="58.4" cy="13.9" r="1.0"/><circle cx="58.9" cy="13.8" r="1.0"/><circle cx="58.3" cy="14.4" r="1.0"/><circle cx="58.7" cy="15.0" r="1.0"/><circle cx="58.1" cy="15.4" r="1.0"/><circle cx="59.5" cy="15.3" r="1.0"/><circle cx="55.4" cy="17.1" r="1.0"/><circle cx="55.7" cy="17.4" r="1.0"/><circle cx="56.5" cy="17.6" r="1.0"/><circle cx="53.3" cy="16.4" r="1.0"/><circle cx="53.5" cy="17.0" r="1.0"/><circle cx="53.8" cy="17.3" r="1.0"/><circle cx="54.1" cy="17.0" r="1.0"/><circle cx="52.7" cy="17.1" r="1.0"/><circle cx="53.0" cy="17.6" r="1.0"/><circle cx="52.7" cy="18.1" r="1.0"/><circle cx="53.6" cy="17.8" r="1.0"/><circle cx="52.6" cy="20.3" r="1.0"/><circle cx="56.7" cy="19.6" r="1.0"/><circle cx="57.9" cy="19.3" r="1.0"/><circle cx="46.0" cy="17.0" r="1.0"/><circle cx="45.7" cy="17.3" r="1.0"/><circle cx="57.5" cy="13.0" r="1.0"/><circle cx="57.8" cy="14.2" r="1.0"/><circle cx="55.3" cy="12.5" r="1.0"/><circle cx="53.3" cy="14.9" r="1.0"/><circle cx="53.2" cy="16.0" r="1.0"/><circle cx="52.0" cy="15.9" r="1.0"/></g>
<g fill="#1c1cf0" fill-opacity="0.6"><circle cx="35.2" cy="17.0" r="1.0"/><circle cx="34.1" cy="18.6" r="1.0"/><circle cx="33.5" cy="19.9" r="1.0"/><circle cx="36.0" cy="19.4" r="1.0"/><circle cx="37.0" cy="19.2" r="1.0"/><circle cx="37.9" cy="19.8" r="1.0"/><circle cx="39.0" cy="18.7" r="1.0"/><circle cx="39.3" cy="18.7" r="1.0"/><circle cx="41.0" cy="19.5" r="1.0"/><circle cx="42.5" cy="20.1" r="1.0"/><circle cx="42.8" cy="20.5" r="1.0"/><circle cx="44.3" cy="19.6" r="1.0"/><circle cx="44.3" cy="20.3" r="1.0"/><circle cx="44.2" cy="20.9" r="1.0"/><circle cx="44.3" cy="21.5" r="1.0"/><circle cx="46.2" cy="21.8" r="1.0"/><circle cx="47.6" cy="21.7" r="1.0"/><circle cx="34.4" cy="20.4" r="1.0"/><circle cx="34.9" cy="20.8" r="1.0"/><circle cx="35.4" cy="20.2" r="1.0"/><circle cx="36.2" cy="20.6" r="1.0"/><circle cx="37.0" cy="20.6" r="1.0"/><circle cx="33.9" cy="21.5" r="1.0"/><circle cx="34.9" cy="21.4" r="1.0"/><circle cx="37.0" cy="21.5" r="1.0"/><circle cx="39.6" cy="20.6" r="1.0"/><circle cx="40.3" cy="21.1" r="1.0"/><circle cx="39.5" cy="21.4" r="1.0"/><circle cx="40.5" cy="21.5" r="1.0"/><circle cx="41.1" cy="21.6" r="1.0"/><circle cx="42.0" cy="21.5" r="1.0"/><circle cx="42.6" cy="22.0" r="1.0"/><circle cx="33.9" cy="22.2" r="1.0"/><circle cx="34.4" cy="22.5" r="1.0"/><circle cx="35.0" cy="22.6" r="1.0"/><circle cx="34.2" cy="23.1" r="1.0"/><circle cx="36.2" cy="22.3" r="1.0"/><circle cx="36.0" cy="22.9" r="1.0"/><circle cx="36.5" cy="23.2" r="1.0"/><circle cx="37.0" cy="23.4" r="1.0"/><circle cx="36.7" cy="23.9" r="1.0"/><circle cx="37.3" cy="23.1" r="1.0"/><circle cx="38.2" cy="22.8" r="1.0"/><circle cx="38.3" cy="23.4" r="1.0"/><circle cx="37.8" cy="23.6" r="1.0"/><circle cx="39.5" cy="22.8" r="1.0"/><circle cx="39.8" cy="22.3" r="1.0"/><circle cx="40.1" cy="22.6" r="1.0"/><circle cx="40.8" cy="22.6" r="1.0"/><circle cx="40.5" cy="23.1" r="1.0"/><circle cx="39.8" cy="23.2" r="1.0"/><circle cx="41.0" cy="23.4" r="1.0"/><circle cx="41.3" cy="23.8" r="1.0"/><circle cx="40.3" cy="23.9" r="1.0"/><circle cx="39.8" cy="24.5" r="1.0"/><circle cx="42.6" cy="23.0" r="1.0"/><circle cx="43.3" cy="23.1" r="1.0"/><circle cx="44.3" cy="22.6" r="1.0"/><circle cx="35.2" cy="24.2" r="1.0"/><circle cx="37.0" cy="24.3" r="1.0"/><circle cx="36.8" cy="24.8" r="1.0"/><circle cx="36.4" cy="25.3" r="1.0"/><circle cx="35.9" cy="25.5" r="1.0"/><circle cx="34.9" cy="24.8" r="1.0"/><circle cx="34.2" cy="25.2" r="1.0"/><circle cx="40.2" cy="25.1" r="1.0"/><circle cx="41.0" cy="24.8" r="1.0"/><circle cx="43.8" cy="24.6" r="1.0"/><circle cx="46.7" cy="24.9" r="1.0"/><circle cx="47.2" cy="24.6" r="1.0"/><circle cx="45.1" cy="25.6" r="1.0"/><circle cx="45.3" cy="25.9" r="1.0"/><circle cx="37.6" cy="26.2" r="1.0"/><circle cx="39.4" cy="25.9" r="1.0"/><circle cx="41.7" cy="26.5" r="1.0"/><circle cx="43.2" cy="27.0" r="1.0"/><circle cx="33.7" cy="27.1" r="1.0"/><circle cx="32.0" cy="27.5" r="1.0"/><circle cx="40.0" cy="29.8" r="1.0"/><circle cx="38.8" cy="23.1" r="1.0"/><circle cx="39.2" cy="23.4" r="1.0"/><circle cx="35.5" cy="21.8" r="1.0"/><circle cx="37.5" cy="22.2" r="1.0"/><circle cx="38.5" cy="23.7" r="1.0"/><circle cx="37.0" cy="22.6" r="1.0"/><circle cx="34.5" cy="21.8" r="1.0"/><circle cx="35.7" cy="23.6" r="1.0"/><circle cx="36.2" cy="24.0" r="1.0"/><circle cx="36.5" cy="22.6" r="1.0"/><circle cx="36.8" cy="23.1" r="1.0"/><circle cx="36.4" cy="23.6" r="1.0"/><circle cx="37.5" cy="23.4" r="1.0"/><circle cx="38.0" cy="23.2" r="1.0"/><circle cx="39.8" cy="22.8" r="1.0"/><circle cx="40.1" cy="23.1" r="1.0"/><circle cx="40.6" cy="22.9" r="1.0"/><circle cx="39.6" cy="23.6" r="1.0"/><circle cx="34.0" cy="22.3" r="1.0"/><circle cx="35.2" cy="24.6" r="1.0"/><circle cx="34.5" cy="25.0" r="1.0"/></g>
<text x="32" y="3.3" font-size="1.9" fill="#333" text-anchor="middle">Iteration: 960</text>
<text x="37" y="5.6" font-size="1.9" fill="#333" text-anchor="middle" textLength="40">w0:-0.69 w1:-0.62 b: 6.15 accuracy:99.00%</text>
<text x="4.6" y="18.6" font-size="3.4" fill="#e84545" textLength="20.5">Loss=0.1488</text>
<rect x="5.6" y="6.9" width="10.4" height="5.4" rx="0.4" fill="none" stroke="#dedede" stroke-width="0.4"/>
<circle cx="7.6" cy="8.5" r="0.5" fill="#f88"/><circle cx="7.6" cy="10.6" r="0.5" fill="#88f"/>
<text x="9.5" y="9.1" font-size="1.6" fill="#999">class 0</text><text x="9.5" y="11.2" font-size="1.6" fill="#999">class 1</text>
</svg>
<svg width="10" height="10" viewBox="0 0 10 10" style="position:absolute;left:519.2px;top:273.6px"><path d="M1.5 1.5L8.5 8.5M8.5 1.5L1.5 8.5" stroke="#696c6e" stroke-width="1.05" fill="none"/></svg>
<svg width="59.2" height="52.5" viewBox="0 0 59.2 52.5" style="position:absolute;left:453.8px;top:338.6px;background:#fff" font-family="'DejaVu Sans','Liberation Sans',sans-serif">
<path d="M4.6 4.4H59V48.6H4.6Z" fill="none" stroke="#c8c8c8" stroke-width="0.5"/>
<path d="M8.0 48.6v1.2M15.1 48.6v1.2M22.2 48.6v1.2M29.3 48.6v1.2M36.4 48.6v1.2M43.5 48.6v1.2M50.6 48.6v1.2M57.7 48.6v1.2M4.6 6.0h-1M4.6 10.9h-1M4.6 15.8h-1M4.6 20.7h-1M4.6 25.6h-1M4.6 30.5h-1M4.6 35.4h-1M4.6 40.3h-1M4.6 45.2h-1" stroke="#cfcfcf" stroke-width="0.5" fill="none"/>
<path d="M24.5 4.4L46 20" stroke="#9fbccc" stroke-width="0.5"/>
<g fill="#ff2a2a" fill-opacity="0.6"><circle cx="51.8" cy="9.6" r="1.0"/><circle cx="54.7" cy="9.4" r="1.0"/><circle cx="52.4" cy="11.2" r="1.0"/><circle cx="52.6" cy="11.8" r="1.0"/><circle cx="53.0" cy="12.5" r="1.0"/><circle cx="53.9" cy="12.8" r="1.0"/><circle cx="54.9" cy="12.1" r="1.0"/><circle cx="55.6" cy="12.5" r="1.0"/><circle cx="56.6" cy="12.5" r="1.0"/><circle cx="57.0" cy="12.6" r="1.0"/><circle cx="58.2" cy="12.5" r="1.0"/><circle cx="58.3" cy="13.0" r="1.0"/><circle cx="62.2" cy="13.2" r="1.0"/><circle cx="45.4" cy="13.2" r="1.0"/><circle cx="47.1" cy="13.2" r="1.0"/><circle cx="48.2" cy="13.5" r="1.0"/><circle cx="49.7" cy="13.6" r="1.0"/><circle cx="50.2" cy="13.5" r="1.0"/><circle cx="50.9" cy="12.8" r="1.0"/><circle cx="46.4" cy="14.7" r="1.0"/><circle cx="45.7" cy="15.5" r="1.0"/><circle cx="49.0" cy="14.4" r="1.0"/><circle cx="49.6" cy="14.4" r="1.0"/><circle cx="48.1" cy="15.3" r="1.0"/><circle cx="48.5" cy="15.6" r="1.0"/><circle cx="49.0" cy="15.6" r="1.0"/><circle cx="48.4" cy="15.9" r="1.0"/><circle cx="50.9" cy="15.6" r="1.0"/><circle cx="50.6" cy="15.9" r="1.0"/><circle cx="51.2" cy="15.5" r="1.0"/><circle cx="49.7" cy="16.4" r="1.0"/><circle cx="50.5" cy="16.6" r="1.0"/><circle cx="49.7" cy="17.6" r="1.0"/><circle cx="50.6" cy="17.3" r="1.0"/><circle cx="51.6" cy="18.0" r="1.0"/><circle cx="51.8" cy="16.9" r="1.0"/><circle cx="52.4" cy="16.4" r="1.0"/><circle cx="52.7" cy="15.9" r="1.0"/><circle cx="52.4" cy="15.4" r="1.0"/><circle cx="52.9" cy="14.9" r="1.0"/><circle cx="52.7" cy="14.2" r="1.0"/><circle cx="53.0" cy="13.8" r="1.0"/><circle cx="53.5" cy="13.9" r="1.0"/><circle cx="53.8" cy="14.4" r="1.0"/><circle cx="53.9" cy="15.0" r="1.0"/><circle cx="53.6" cy="15.3" r="1.0"/><circle cx="53.3" cy="15.6" r="1.0"/><circle cx="53.9" cy="15.7" r="1.0"/><circle cx="54.4" cy="15.4" r="1.0"/><circle cx="54.1" cy="14.2" r="1.0"/><circle cx="54.7" cy="14.3" r="1.0"/><circle cx="55.1" cy="14.0" r="1.0"/><circle cx="55.7" cy="13.6" r="1.0"/><circle cx="55.9" cy="14.3" r="1.0"/><circle cx="55.7" cy="15.3" r="1.0"/><circle cx="55.9" cy="15.7" r="1.0"/><circle cx="56.6" cy="13.4" r="1.0"/><circle cx="56.9" cy="13.9" r="1.0"/><circle cx="57.1" cy="14.3" r="1.0"/><circle cx="57.2" cy="15.0" r="1.0"/><circle cx="57.1" cy="15.9" r="1.0"/><circle cx="57.2" cy="16.6" r="1.0"/><circle cx="58.1" cy="13.4" r="1.0"/><circle cx="58.4" cy="13.9" r="1.0"/><circle cx="58.9" cy="13.8" r="1.0"/><circle cx="58.3" cy="14.4" r="1.0"/><circle cx="58.7" cy="15.0" r="1.0"/><circle cx="58.1" cy="15.4" r="1.0"/><circle cx="59.5" cy="15.3" r="1.0"/><circle cx="55.4" cy="17.1" r="1.0"/><circle cx="55.7" cy="17.4" r="1.0"/><circle cx="56.5" cy="17.6" r="1.0"/><circle cx="53.3" cy="16.4" r="1.0"/><circle cx="53.5" cy="17.0" r="1.0"/><circle cx="53.8" cy="17.3" r="1.0"/><circle cx="54.1" cy="17.0" r="1.0"/><circle cx="52.7" cy="17.1" r="1.0"/><circle cx="53.0" cy="17.6" r="1.0"/><circle cx="52.7" cy="18.1" r="1.0"/><circle cx="53.6" cy="17.8" r="1.0"/><circle cx="52.6" cy="20.3" r="1.0"/><circle cx="56.7" cy="19.6" r="1.0"/><circle cx="57.9" cy="19.3" r="1.0"/><circle cx="46.0" cy="17.0" r="1.0"/><circle cx="45.7" cy="17.3" r="1.0"/><circle cx="57.5" cy="13.0" r="1.0"/><circle cx="57.8" cy="14.2" r="1.0"/><circle cx="55.3" cy="12.5" r="1.0"/><circle cx="53.3" cy="14.9" r="1.0"/><circle cx="53.2" cy="16.0" r="1.0"/><circle cx="52.0" cy="15.9" r="1.0"/></g>
<g fill="#1c1cf0" fill-opacity="0.6"><circle cx="35.2" cy="17.0" r="1.0"/><circle cx="34.1" cy="18.6" r="1.0"/><circle cx="33.5" cy="19.9" r="1.0"/><circle cx="36.0" cy="19.4" r="1.0"/><circle cx="37.0" cy="19.2" r="1.0"/><circle cx="37.9" cy="19.8" r="1.0"/><circle cx="39.0" cy="18.7" r="1.0"/><circle cx="39.3" cy="18.7" r="1.0"/><circle cx="41.0" cy="19.5" r="1.0"/><circle cx="42.5" cy="20.1" r="1.0"/><circle cx="42.8" cy="20.5" r="1.0"/><circle cx="44.3" cy="19.6" r="1.0"/><circle cx="44.3" cy="20.3" r="1.0"/><circle cx="44.2" cy="20.9" r="1.0"/><circle cx="44.3" cy="21.5" r="1.0"/><circle cx="46.2" cy="21.8" r="1.0"/><circle cx="47.6" cy="21.7" r="1.0"/><circle cx="34.4" cy="20.4" r="1.0"/><circle cx="34.9" cy="20.8" r="1.0"/><circle cx="35.4" cy="20.2" r="1.0"/><circle cx="36.2" cy="20.6" r="1.0"/><circle cx="37.0" cy="20.6" r="1.0"/><circle cx="33.9" cy="21.5" r="1.0"/><circle cx="34.9" cy="21.4" r="1.0"/><circle cx="37.0" cy="21.5" r="1.0"/><circle cx="39.6" cy="20.6" r="1.0"/><circle cx="40.3" cy="21.1" r="1.0"/><circle cx="39.5" cy="21.4" r="1.0"/><circle cx="40.5" cy="21.5" r="1.0"/><circle cx="41.1" cy="21.6" r="1.0"/><circle cx="42.0" cy="21.5" r="1.0"/><circle cx="42.6" cy="22.0" r="1.0"/><circle cx="33.9" cy="22.2" r="1.0"/><circle cx="34.4" cy="22.5" r="1.0"/><circle cx="35.0" cy="22.6" r="1.0"/><circle cx="34.2" cy="23.1" r="1.0"/><circle cx="36.2" cy="22.3" r="1.0"/><circle cx="36.0" cy="22.9" r="1.0"/><circle cx="36.5" cy="23.2" r="1.0"/><circle cx="37.0" cy="23.4" r="1.0"/><circle cx="36.7" cy="23.9" r="1.0"/><circle cx="37.3" cy="23.1" r="1.0"/><circle cx="38.2" cy="22.8" r="1.0"/><circle cx="38.3" cy="23.4" r="1.0"/><circle cx="37.8" cy="23.6" r="1.0"/><circle cx="39.5" cy="22.8" r="1.0"/><circle cx="39.8" cy="22.3" r="1.0"/><circle cx="40.1" cy="22.6" r="1.0"/><circle cx="40.8" cy="22.6" r="1.0"/><circle cx="40.5" cy="23.1" r="1.0"/><circle cx="39.8" cy="23.2" r="1.0"/><circle cx="41.0" cy="23.4" r="1.0"/><circle cx="41.3" cy="23.8" r="1.0"/><circle cx="40.3" cy="23.9" r="1.0"/><circle cx="39.8" cy="24.5" r="1.0"/><circle cx="42.6" cy="23.0" r="1.0"/><circle cx="43.3" cy="23.1" r="1.0"/><circle cx="44.3" cy="22.6" r="1.0"/><circle cx="35.2" cy="24.2" r="1.0"/><circle cx="37.0" cy="24.3" r="1.0"/><circle cx="36.8" cy="24.8" r="1.0"/><circle cx="36.4" cy="25.3" r="1.0"/><circle cx="35.9" cy="25.5" r="1.0"/><circle cx="34.9" cy="24.8" r="1.0"/><circle cx="34.2" cy="25.2" r="1.0"/><circle cx="40.2" cy="25.1" r="1.0"/><circle cx="41.0" cy="24.8" r="1.0"/><circle cx="43.8" cy="24.6" r="1.0"/><circle cx="46.7" cy="24.9" r="1.0"/><circle cx="47.2" cy="24.6" r="1.0"/><circle cx="45.1" cy="25.6" r="1.0"/><circle cx="45.3" cy="25.9" r="1.0"/><circle cx="37.6" cy="26.2" r="1.0"/><circle cx="39.4" cy="25.9" r="1.0"/><circle cx="41.7" cy="26.5" r="1.0"/><circle cx="43.2" cy="27.0" r="1.0"/><circle cx="33.7" cy="27.1" r="1.0"/><circle cx="32.0" cy="27.5" r="1.0"/><circle cx="40.0" cy="29.8" r="1.0"/><circle cx="38.8" cy="23.1" r="1.0"/><circle cx="39.2" cy="23.4" r="1.0"/><circle cx="35.5" cy="21.8" r="1.0"/><circle cx="37.5" cy="22.2" r="1.0"/><circle cx="38.5" cy="23.7" r="1.0"/><circle cx="37.0" cy="22.6" r="1.0"/><circle cx="34.5" cy="21.8" r="1.0"/><circle cx="35.7" cy="23.6" r="1.0"/><circle cx="36.2" cy="24.0" r="1.0"/><circle cx="36.5" cy="22.6" r="1.0"/><circle cx="36.8" cy="23.1" r="1.0"/><circle cx="36.4" cy="23.6" r="1.0"/><circle cx="37.5" cy="23.4" r="1.0"/><circle cx="38.0" cy="23.2" r="1.0"/><circle cx="39.8" cy="22.8" r="1.0"/><circle cx="40.1" cy="23.1" r="1.0"/><circle cx="40.6" cy="22.9" r="1.0"/><circle cx="39.6" cy="23.6" r="1.0"/><circle cx="34.0" cy="22.3" r="1.0"/><circle cx="35.2" cy="24.6" r="1.0"/><circle cx="34.5" cy="25.0" r="1.0"/></g>
<text x="32" y="3.3" font-size="1.9" fill="#333" text-anchor="middle">Iteration: 960</text>
<text x="37" y="5.6" font-size="1.9" fill="#333" text-anchor="middle" textLength="40">w0:-0.69 w1:-0.62 b: 6.15 accuracy:99.00%</text>
<text x="4.6" y="18.6" font-size="3.4" fill="#e84545" textLength="20.5">Loss=0.1488</text>
<rect x="5.6" y="6.9" width="10.4" height="5.4" rx="0.4" fill="none" stroke="#dedede" stroke-width="0.4"/>
<circle cx="7.6" cy="8.5" r="0.5" fill="#f88"/><circle cx="7.6" cy="10.6" r="0.5" fill="#88f"/>
<text x="9.5" y="9.1" font-size="1.6" fill="#999">class 0</text><text x="9.5" y="11.2" font-size="1.6" fill="#999">class 1</text>
</svg>
<svg width="10" height="10" viewBox="0 0 10 10" style="position:absolute;left:519.2px;top:359.8px"><path d="M1.5 1.5L8.5 8.5M8.5 1.5L1.5 8.5" stroke="#696c6e" stroke-width="1.05" fill="none"/></svg>
<svg width="59.2" height="52.5" viewBox="0 0 59.2 52.5" style="position:absolute;left:453.8px;top:424.9px;background:#fff" font-family="'DejaVu Sans','Liberation Sans',sans-serif">
<path d="M4.6 4.4H59V48.6H4.6Z" fill="none" stroke="#c8c8c8" stroke-width="0.5"/>
<path d="M8.0 48.6v1.2M15.1 48.6v1.2M22.2 48.6v1.2M29.3 48.6v1.2M36.4 48.6v1.2M43.5 48.6v1.2M50.6 48.6v1.2M57.7 48.6v1.2M4.6 6.0h-1M4.6 10.9h-1M4.6 15.8h-1M4.6 20.7h-1M4.6 25.6h-1M4.6 30.5h-1M4.6 35.4h-1M4.6 40.3h-1M4.6 45.2h-1" stroke="#cfcfcf" stroke-width="0.5" fill="none"/>
<path d="M24.5 4.4L46 20" stroke="#9fbccc" stroke-width="0.5"/>
<g fill="#ff2a2a" fill-opacity="0.6"><circle cx="51.8" cy="9.6" r="1.0"/><circle cx="54.7" cy="9.4" r="1.0"/><circle cx="52.4" cy="11.2" r="1.0"/><circle cx="52.6" cy="11.8" r="1.0"/><circle cx="53.0" cy="12.5" r="1.0"/><circle cx="53.9" cy="12.8" r="1.0"/><circle cx="54.9" cy="12.1" r="1.0"/><circle cx="55.6" cy="12.5" r="1.0"/><circle cx="56.6" cy="12.5" r="1.0"/><circle cx="57.0" cy="12.6" r="1.0"/><circle cx="58.2" cy="12.5" r="1.0"/><circle cx="58.3" cy="13.0" r="1.0"/><circle cx="62.2" cy="13.2" r="1.0"/><circle cx="45.4" cy="13.2" r="1.0"/><circle cx="47.1" cy="13.2" r="1.0"/><circle cx="48.2" cy="13.5" r="1.0"/><circle cx="49.7" cy="13.6" r="1.0"/><circle cx="50.2" cy="13.5" r="1.0"/><circle cx="50.9" cy="12.8" r="1.0"/><circle cx="46.4" cy="14.7" r="1.0"/><circle cx="45.7" cy="15.5" r="1.0"/><circle cx="49.0" cy="14.4" r="1.0"/><circle cx="49.6" cy="14.4" r="1.0"/><circle cx="48.1" cy="15.3" r="1.0"/><circle cx="48.5" cy="15.6" r="1.0"/><circle cx="49.0" cy="15.6" r="1.0"/><circle cx="48.4" cy="15.9" r="1.0"/><circle cx="50.9" cy="15.6" r="1.0"/><circle cx="50.6" cy="15.9" r="1.0"/><circle cx="51.2" cy="15.5" r="1.0"/><circle cx="49.7" cy="16.4" r="1.0"/><circle cx="50.5" cy="16.6" r="1.0"/><circle cx="49.7" cy="17.6" r="1.0"/><circle cx="50.6" cy="17.3" r="1.0"/><circle cx="51.6" cy="18.0" r="1.0"/><circle cx="51.8" cy="16.9" r="1.0"/><circle cx="52.4" cy="16.4" r="1.0"/><circle cx="52.7" cy="15.9" r="1.0"/><circle cx="52.4" cy="15.4" r="1.0"/><circle cx="52.9" cy="14.9" r="1.0"/><circle cx="52.7" cy="14.2" r="1.0"/><circle cx="53.0" cy="13.8" r="1.0"/><circle cx="53.5" cy="13.9" r="1.0"/><circle cx="53.8" cy="14.4" r="1.0"/><circle cx="53.9" cy="15.0" r="1.0"/><circle cx="53.6" cy="15.3" r="1.0"/><circle cx="53.3" cy="15.6" r="1.0"/><circle cx="53.9" cy="15.7" r="1.0"/><circle cx="54.4" cy="15.4" r="1.0"/><circle cx="54.1" cy="14.2" r="1.0"/><circle cx="54.7" cy="14.3" r="1.0"/><circle cx="55.1" cy="14.0" r="1.0"/><circle cx="55.7" cy="13.6" r="1.0"/><circle cx="55.9" cy="14.3" r="1.0"/><circle cx="55.7" cy="15.3" r="1.0"/><circle cx="55.9" cy="15.7" r="1.0"/><circle cx="56.6" cy="13.4" r="1.0"/><circle cx="56.9" cy="13.9" r="1.0"/><circle cx="57.1" cy="14.3" r="1.0"/><circle cx="57.2" cy="15.0" r="1.0"/><circle cx="57.1" cy="15.9" r="1.0"/><circle cx="57.2" cy="16.6" r="1.0"/><circle cx="58.1" cy="13.4" r="1.0"/><circle cx="58.4" cy="13.9" r="1.0"/><circle cx="58.9" cy="13.8" r="1.0"/><circle cx="58.3" cy="14.4" r="1.0"/><circle cx="58.7" cy="15.0" r="1.0"/><circle cx="58.1" cy="15.4" r="1.0"/><circle cx="59.5" cy="15.3" r="1.0"/><circle cx="55.4" cy="17.1" r="1.0"/><circle cx="55.7" cy="17.4" r="1.0"/><circle cx="56.5" cy="17.6" r="1.0"/><circle cx="53.3" cy="16.4" r="1.0"/><circle cx="53.5" cy="17.0" r="1.0"/><circle cx="53.8" cy="17.3" r="1.0"/><circle cx="54.1" cy="17.0" r="1.0"/><circle cx="52.7" cy="17.1" r="1.0"/><circle cx="53.0" cy="17.6" r="1.0"/><circle cx="52.7" cy="18.1" r="1.0"/><circle cx="53.6" cy="17.8" r="1.0"/><circle cx="52.6" cy="20.3" r="1.0"/><circle cx="56.7" cy="19.6" r="1.0"/><circle cx="57.9" cy="19.3" r="1.0"/><circle cx="46.0" cy="17.0" r="1.0"/><circle cx="45.7" cy="17.3" r="1.0"/><circle cx="57.5" cy="13.0" r="1.0"/><circle cx="57.8" cy="14.2" r="1.0"/><circle cx="55.3" cy="12.5" r="1.0"/><circle cx="53.3" cy="14.9" r="1.0"/><circle cx="53.2" cy="16.0" r="1.0"/><circle cx="52.0" cy="15.9" r="1.0"/></g>
<g fill="#1c1cf0" fill-opacity="0.6"><circle cx="35.2" cy="17.0" r="1.0"/><circle cx="34.1" cy="18.6" r="1.0"/><circle cx="33.5" cy="19.9" r="1.0"/><circle cx="36.0" cy="19.4" r="1.0"/><circle cx="37.0" cy="19.2" r="1.0"/><circle cx="37.9" cy="19.8" r="1.0"/><circle cx="39.0" cy="18.7" r="1.0"/><circle cx="39.3" cy="18.7" r="1.0"/><circle cx="41.0" cy="19.5" r="1.0"/><circle cx="42.5" cy="20.1" r="1.0"/><circle cx="42.8" cy="20.5" r="1.0"/><circle cx="44.3" cy="19.6" r="1.0"/><circle cx="44.3" cy="20.3" r="1.0"/><circle cx="44.2" cy="20.9" r="1.0"/><circle cx="44.3" cy="21.5" r="1.0"/><circle cx="46.2" cy="21.8" r="1.0"/><circle cx="47.6" cy="21.7" r="1.0"/><circle cx="34.4" cy="20.4" r="1.0"/><circle cx="34.9" cy="20.8" r="1.0"/><circle cx="35.4" cy="20.2" r="1.0"/><circle cx="36.2" cy="20.6" r="1.0"/><circle cx="37.0" cy="20.6" r="1.0"/><circle cx="33.9" cy="21.5" r="1.0"/><circle cx="34.9" cy="21.4" r="1.0"/><circle cx="37.0" cy="21.5" r="1.0"/><circle cx="39.6" cy="20.6" r="1.0"/><circle cx="40.3" cy="21.1" r="1.0"/><circle cx="39.5" cy="21.4" r="1.0"/><circle cx="40.5" cy="21.5" r="1.0"/><circle cx="41.1" cy="21.6" r="1.0"/><circle cx="42.0" cy="21.5" r="1.0"/><circle cx="42.6" cy="22.0" r="1.0"/><circle cx="33.9" cy="22.2" r="1.0"/><circle cx="34.4" cy="22.5" r="1.0"/><circle cx="35.0" cy="22.6" r="1.0"/><circle cx="34.2" cy="23.1" r="1.0"/><circle cx="36.2" cy="22.3" r="1.0"/><circle cx="36.0" cy="22.9" r="1.0"/><circle cx="36.5" cy="23.2" r="1.0"/><circle cx="37.0" cy="23.4" r="1.0"/><circle cx="36.7" cy="23.9" r="1.0"/><circle cx="37.3" cy="23.1" r="1.0"/><circle cx="38.2" cy="22.8" r="1.0"/><circle cx="38.3" cy="23.4" r="1.0"/><circle cx="37.8" cy="23.6" r="1.0"/><circle cx="39.5" cy="22.8" r="1.0"/><circle cx="39.8" cy="22.3" r="1.0"/><circle cx="40.1" cy="22.6" r="1.0"/><circle cx="40.8" cy="22.6" r="1.0"/><circle cx="40.5" cy="23.1" r="1.0"/><circle cx="39.8" cy="23.2" r="1.0"/><circle cx="41.0" cy="23.4" r="1.0"/><circle cx="41.3" cy="23.8" r="1.0"/><circle cx="40.3" cy="23.9" r="1.0"/><circle cx="39.8" cy="24.5" r="1.0"/><circle cx="42.6" cy="23.0" r="1.0"/><circle cx="43.3" cy="23.1" r="1.0"/><circle cx="44.3" cy="22.6" r="1.0"/><circle cx="35.2" cy="24.2" r="1.0"/><circle cx="37.0" cy="24.3" r="1.0"/><circle cx="36.8" cy="24.8" r="1.0"/><circle cx="36.4" cy="25.3" r="1.0"/><circle cx="35.9" cy="25.5" r="1.0"/><circle cx="34.9" cy="24.8" r="1.0"/><circle cx="34.2" cy="25.2" r="1.0"/><circle cx="40.2" cy="25.1" r="1.0"/><circle cx="41.0" cy="24.8" r="1.0"/><circle cx="43.8" cy="24.6" r="1.0"/><circle cx="46.7" cy="24.9" r="1.0"/><circle cx="47.2" cy="24.6" r="1.0"/><circle cx="45.1" cy="25.6" r="1.0"/><circle cx="45.3" cy="25.9" r="1.0"/><circle cx="37.6" cy="26.2" r="1.0"/><circle cx="39.4" cy="25.9" r="1.0"/><circle cx="41.7" cy="26.5" r="1.0"/><circle cx="43.2" cy="27.0" r="1.0"/><circle cx="33.7" cy="27.1" r="1.0"/><circle cx="32.0" cy="27.5" r="1.0"/><circle cx="40.0" cy="29.8" r="1.0"/><circle cx="38.8" cy="23.1" r="1.0"/><circle cx="39.2" cy="23.4" r="1.0"/><circle cx="35.5" cy="21.8" r="1.0"/><circle cx="37.5" cy="22.2" r="1.0"/><circle cx="38.5" cy="23.7" r="1.0"/><circle cx="37.0" cy="22.6" r="1.0"/><circle cx="34.5" cy="21.8" r="1.0"/><circle cx="35.7" cy="23.6" r="1.0"/><circle cx="36.2" cy="24.0" r="1.0"/><circle cx="36.5" cy="22.6" r="1.0"/><circle cx="36.8" cy="23.1" r="1.0"/><circle cx="36.4" cy="23.6" r="1.0"/><circle cx="37.5" cy="23.4" r="1.0"/><circle cx="38.0" cy="23.2" r="1.0"/><circle cx="39.8" cy="22.8" r="1.0"/><circle cx="40.1" cy="23.1" r="1.0"/><circle cx="40.6" cy="22.9" r="1.0"/><circle cx="39.6" cy="23.6" r="1.0"/><circle cx="34.0" cy="22.3" r="1.0"/><circle cx="35.2" cy="24.6" r="1.0"/><circle cx="34.5" cy="25.0" r="1.0"/></g>
<text x="32" y="3.3" font-size="1.9" fill="#333" text-anchor="middle">Iteration: 960</text>
<text x="37" y="5.6" font-size="1.9" fill="#333" text-anchor="middle" textLength="40">w0:-0.69 w1:-0.62 b: 6.15 accuracy:99.00%</text>
<text x="4.6" y="18.6" font-size="3.4" fill="#e84545" textLength="20.5">Loss=0.1488</text>
<rect x="5.6" y="6.9" width="10.4" height="5.4" rx="0.4" fill="none" stroke="#dedede" stroke-width="0.4"/>
<circle cx="7.6" cy="8.5" r="0.5" fill="#f88"/><circle cx="7.6" cy="10.6" r="0.5" fill="#88f"/>
<text x="9.5" y="9.1" font-size="1.6" fill="#999">class 0</text><text x="9.5" y="11.2" font-size="1.6" fill="#999">class 1</text>
</svg>
<svg width="10" height="10" viewBox="0 0 10 10" style="position:absolute;left:519.2px;top:446.1px"><path d="M1.5 1.5L8.5 8.5M8.5 1.5L1.5 8.5" stroke="#696c6e" stroke-width="1.05" fill="none"/></svg>
</div>
<svg id="plot" width="434" height="326" viewBox="593 141 434 326" style="position:absolute;left:593px;top:141px" font-family="'DejaVu Sans','Liberation Sans',sans-serif">
<rect x="593" y="141" width="433" height="325.5" fill="#77797b"/>
<rect x="595.5" y="142.8" width="428.2" height="321.6" fill="#ffffff"/>
<line x1="752.8" y1="182.4" x2="903" y2="282" stroke="#2b7ba6" stroke-width="1.2"/>
<g fill="#f80404"><circle cx="910.4" cy="192.0" r="3.0"/><circle cx="931.7" cy="190.7" r="3.0"/><circle cx="914.8" cy="204.3" r="3.0"/><circle cx="916.3" cy="209.3" r="3.0"/><circle cx="919.1" cy="214.1" r="3.0"/><circle cx="925.7" cy="216.7" r="3.0"/><circle cx="933.0" cy="211.5" r="3.0"/><circle cx="938.0" cy="214.1" r="3.0"/><circle cx="945.2" cy="214.8" r="3.0"/><circle cx="948.3" cy="215.2" r="3.0"/><circle cx="957.0" cy="214.6" r="3.0"/><circle cx="957.6" cy="218.5" r="3.0"/><circle cx="985.9" cy="220.2" r="3.0"/><circle cx="864.8" cy="220.2" r="3.0"/><circle cx="877.0" cy="220.2" r="3.0"/><circle cx="884.8" cy="222.4" r="3.0"/><circle cx="895.2" cy="222.8" r="3.0"/><circle cx="898.9" cy="222.4" r="3.0"/><circle cx="904.3" cy="216.7" r="3.0"/><circle cx="871.7" cy="231.5" r="3.0"/><circle cx="866.3" cy="237.6" r="3.0"/><circle cx="890.2" cy="229.3" r="3.0"/><circle cx="894.6" cy="228.9" r="3.0"/><circle cx="883.7" cy="235.9" r="3.0"/><circle cx="887.0" cy="238.0" r="3.0"/><circle cx="890.2" cy="238.5" r="3.0"/><circle cx="885.9" cy="240.2" r="3.0"/><circle cx="904.3" cy="238.0" r="3.0"/><circle cx="902.2" cy="240.2" r="3.0"/><circle cx="906.1" cy="237.6" r="3.0"/><circle cx="895.7" cy="244.6" r="3.0"/><circle cx="901.1" cy="245.7" r="3.0"/><circle cx="895.7" cy="253.7" r="3.0"/><circle cx="902.2" cy="251.1" r="3.0"/><circle cx="909.1" cy="256.5" r="3.0"/><circle cx="910.9" cy="247.8" r="3.0"/><circle cx="915.2" cy="244.6" r="3.0"/><circle cx="917.4" cy="240.2" r="3.0"/><circle cx="915.2" cy="237.0" r="3.0"/><circle cx="918.5" cy="232.6" r="3.0"/><circle cx="917.4" cy="227.2" r="3.0"/><circle cx="919.6" cy="224.6" r="3.0"/><circle cx="922.8" cy="225.4" r="3.0"/><circle cx="925.0" cy="229.3" r="3.0"/><circle cx="926.1" cy="233.7" r="3.0"/><circle cx="923.9" cy="235.9" r="3.0"/><circle cx="921.7" cy="238.0" r="3.0"/><circle cx="926.1" cy="239.1" r="3.0"/><circle cx="929.3" cy="237.0" r="3.0"/><circle cx="927.2" cy="227.2" r="3.0"/><circle cx="931.5" cy="228.3" r="3.0"/><circle cx="934.8" cy="226.1" r="3.0"/><circle cx="939.1" cy="222.8" r="3.0"/><circle cx="940.2" cy="228.3" r="3.0"/><circle cx="939.1" cy="235.9" r="3.0"/><circle cx="940.2" cy="239.1" r="3.0"/><circle cx="945.7" cy="221.7" r="3.0"/><circle cx="947.8" cy="225.0" r="3.0"/><circle cx="948.9" cy="228.3" r="3.0"/><circle cx="950.0" cy="233.3" r="3.0"/><circle cx="948.9" cy="240.2" r="3.0"/><circle cx="950.0" cy="245.7" r="3.0"/><circle cx="956.5" cy="221.7" r="3.0"/><circle cx="958.7" cy="225.0" r="3.0"/><circle cx="962.0" cy="224.6" r="3.0"/><circle cx="957.6" cy="229.3" r="3.0"/><circle cx="960.9" cy="233.3" r="3.0"/><circle cx="956.5" cy="237.0" r="3.0"/><circle cx="966.3" cy="236.3" r="3.0"/><circle cx="937.0" cy="250.0" r="3.0"/><circle cx="939.1" cy="252.2" r="3.0"/><circle cx="944.6" cy="253.3" r="3.0"/><circle cx="921.7" cy="244.6" r="3.0"/><circle cx="922.8" cy="248.9" r="3.0"/><circle cx="925.0" cy="251.1" r="3.0"/><circle cx="927.2" cy="248.9" r="3.0"/><circle cx="917.4" cy="250.0" r="3.0"/><circle cx="919.6" cy="253.3" r="3.0"/><circle cx="917.4" cy="257.6" r="3.0"/><circle cx="923.9" cy="255.4" r="3.0"/><circle cx="916.3" cy="273.9" r="3.0"/><circle cx="946.3" cy="268.9" r="3.0"/><circle cx="955.0" cy="266.3" r="3.0"/><circle cx="868.5" cy="248.9" r="3.0"/><circle cx="866.3" cy="251.5" r="3.0"/><circle cx="952.2" cy="218.5" r="3.0"/><circle cx="954.3" cy="227.2" r="3.0"/><circle cx="935.9" cy="214.1" r="3.0"/><circle cx="921.7" cy="232.6" r="3.0"/><circle cx="920.7" cy="241.3" r="3.0"/><circle cx="912.0" cy="240.2" r="3.0"/></g>
<g fill="#0303f6"><circle cx="808.1" cy="240.7" r="3.0"/><circle cx="800.2" cy="252.6" r="3.0"/><circle cx="795.7" cy="262.9" r="3.0"/><circle cx="814.0" cy="258.6" r="3.0"/><circle cx="821.2" cy="257.4" r="3.0"/><circle cx="827.6" cy="262.1" r="3.0"/><circle cx="835.5" cy="253.3" r="3.0"/><circle cx="837.9" cy="253.3" r="3.0"/><circle cx="849.8" cy="259.8" r="3.0"/><circle cx="861.2" cy="264.5" r="3.0"/><circle cx="862.9" cy="267.6" r="3.0"/><circle cx="873.6" cy="260.5" r="3.0"/><circle cx="873.6" cy="265.7" r="3.0"/><circle cx="873.1" cy="270.5" r="3.0"/><circle cx="873.6" cy="275.2" r="3.0"/><circle cx="887.9" cy="277.1" r="3.0"/><circle cx="897.4" cy="276.4" r="3.0"/><circle cx="802.1" cy="266.9" r="3.0"/><circle cx="805.7" cy="269.3" r="3.0"/><circle cx="809.3" cy="265.2" r="3.0"/><circle cx="815.2" cy="268.1" r="3.0"/><circle cx="821.2" cy="268.1" r="3.0"/><circle cx="798.6" cy="275.2" r="3.0"/><circle cx="805.7" cy="274.0" r="3.0"/><circle cx="821.2" cy="275.2" r="3.0"/><circle cx="840.2" cy="268.1" r="3.0"/><circle cx="845.0" cy="271.7" r="3.0"/><circle cx="839.0" cy="274.0" r="3.0"/><circle cx="846.2" cy="275.2" r="3.0"/><circle cx="851.0" cy="275.7" r="3.0"/><circle cx="856.9" cy="275.2" r="3.0"/><circle cx="861.7" cy="278.8" r="3.0"/><circle cx="798.6" cy="280.0" r="3.0"/><circle cx="802.1" cy="282.4" r="3.0"/><circle cx="806.9" cy="283.6" r="3.0"/><circle cx="801.0" cy="287.1" r="3.0"/><circle cx="815.2" cy="281.2" r="3.0"/><circle cx="814.0" cy="286.0" r="3.0"/><circle cx="817.6" cy="288.3" r="3.0"/><circle cx="821.2" cy="289.5" r="3.0"/><circle cx="818.8" cy="293.1" r="3.0"/><circle cx="823.6" cy="287.1" r="3.0"/><circle cx="829.5" cy="284.8" r="3.0"/><circle cx="830.7" cy="289.5" r="3.0"/><circle cx="827.1" cy="291.4" r="3.0"/><circle cx="839.0" cy="284.8" r="3.0"/><circle cx="841.4" cy="281.2" r="3.0"/><circle cx="843.8" cy="283.6" r="3.0"/><circle cx="848.6" cy="283.6" r="3.0"/><circle cx="846.2" cy="287.1" r="3.0"/><circle cx="841.4" cy="288.3" r="3.0"/><circle cx="849.8" cy="289.5" r="3.0"/><circle cx="852.1" cy="292.4" r="3.0"/><circle cx="845.0" cy="293.1" r="3.0"/><circle cx="841.4" cy="297.9" r="3.0"/><circle cx="861.7" cy="286.7" r="3.0"/><circle cx="866.4" cy="287.1" r="3.0"/><circle cx="873.6" cy="283.6" r="3.0"/><circle cx="808.1" cy="295.5" r="3.0"/><circle cx="821.2" cy="296.7" r="3.0"/><circle cx="820.0" cy="300.2" r="3.0"/><circle cx="816.4" cy="303.8" r="3.0"/><circle cx="812.9" cy="305.7" r="3.0"/><circle cx="805.7" cy="300.2" r="3.0"/><circle cx="801.0" cy="303.3" r="3.0"/><circle cx="844.5" cy="302.6" r="3.0"/><circle cx="849.8" cy="300.2" r="3.0"/><circle cx="870.5" cy="299.0" r="3.0"/><circle cx="891.4" cy="301.0" r="3.0"/><circle cx="895.0" cy="298.6" r="3.0"/><circle cx="879.5" cy="306.7" r="3.0"/><circle cx="881.4" cy="308.6" r="3.0"/><circle cx="825.2" cy="311.0" r="3.0"/><circle cx="838.6" cy="308.6" r="3.0"/><circle cx="855.0" cy="313.3" r="3.0"/><circle cx="866.0" cy="316.9" r="3.0"/><circle cx="797.4" cy="318.1" r="3.0"/><circle cx="784.8" cy="321.2" r="3.0"/><circle cx="843.1" cy="338.3" r="3.0"/><circle cx="834.3" cy="287.1" r="3.0"/><circle cx="836.7" cy="289.5" r="3.0"/><circle cx="810.5" cy="277.6" r="3.0"/><circle cx="824.8" cy="280.0" r="3.0"/><circle cx="831.9" cy="291.9" r="3.0"/><circle cx="821.2" cy="283.6" r="3.0"/><circle cx="803.3" cy="277.6" r="3.0"/><circle cx="811.7" cy="290.7" r="3.0"/><circle cx="815.2" cy="294.3" r="3.0"/><circle cx="817.6" cy="283.6" r="3.0"/><circle cx="820.0" cy="287.1" r="3.0"/><circle cx="816.4" cy="290.7" r="3.0"/><circle cx="824.8" cy="289.5" r="3.0"/><circle cx="828.3" cy="288.3" r="3.0"/><circle cx="841.4" cy="285.2" r="3.0"/><circle cx="843.8" cy="287.1" r="3.0"/><circle cx="847.4" cy="286.0" r="3.0"/><circle cx="840.2" cy="290.7" r="3.0"/><circle cx="799.8" cy="281.2" r="3.0"/><circle cx="808.1" cy="299.0" r="3.0"/><circle cx="803.3" cy="301.4" r="3.0"/></g>
<rect x="626.2" y="182.4" width="381.8" height="256.0" fill="none" stroke="#333" stroke-width="0.8"/>
<g stroke="#333" stroke-width="0.7"><line x1="651.6" y1="438.4" x2="651.6" y2="441.0"/><line x1="702.5" y1="438.4" x2="702.5" y2="441.0"/><line x1="753.4" y1="438.4" x2="753.4" y2="441.0"/><line x1="804.3" y1="438.4" x2="804.3" y2="441.0"/><line x1="855.2" y1="438.4" x2="855.2" y2="441.0"/><line x1="906.1" y1="438.4" x2="906.1" y2="441.0"/><line x1="957.0" y1="438.4" x2="957.0" y2="441.0"/><line x1="1007.9" y1="438.4" x2="1007.9" y2="441.0"/><line x1="623.6" y1="182.4" x2="626.2" y2="182.4"/><line x1="623.6" y1="212.5" x2="626.2" y2="212.5"/><line x1="623.6" y1="242.6" x2="626.2" y2="242.6"/><line x1="623.6" y1="272.8" x2="626.2" y2="272.8"/><line x1="623.6" y1="302.9" x2="626.2" y2="302.9"/><line x1="623.6" y1="333.0" x2="626.2" y2="333.0"/><line x1="623.6" y1="363.1" x2="626.2" y2="363.1"/><line x1="623.6" y1="393.2" x2="626.2" y2="393.2"/><line x1="623.6" y1="423.4" x2="626.2" y2="423.4"/></g>
<g font-size="9.3" fill="#222"><text x="651.6" y="451.9" text-anchor="middle">−4</text><text x="702.5" y="451.9" text-anchor="middle">−2</text><text x="753.4" y="451.9" text-anchor="middle">0</text><text x="804.3" y="451.9" text-anchor="middle">2</text><text x="855.2" y="451.9" text-anchor="middle">4</text><text x="906.1" y="451.9" text-anchor="middle">6</text><text x="957.0" y="451.9" text-anchor="middle">8</text><text x="1007.9" y="451.9" text-anchor="middle">10</text><text x="620.1" y="185.9" text-anchor="end">10</text><text x="620.1" y="216.0" text-anchor="end">8</text><text x="620.1" y="246.1" text-anchor="end">6</text><text x="620.1" y="276.3" text-anchor="end">4</text><text x="620.1" y="306.4" text-anchor="end">2</text><text x="620.1" y="336.5" text-anchor="end">0</text><text x="620.1" y="366.6" text-anchor="end">−2</text><text x="620.1" y="396.7" text-anchor="end">−4</text><text x="620.1" y="426.9" text-anchor="end">−6</text></g>
<g font-size="11.1" fill="#1a1a1a" text-anchor="middle"><text x="817.0" y="162.3">Iteration: 960</text><text x="817.0" y="176.6">w0:-0.69 w1:-0.62 b: 6.15 accuracy:99.00%</text></g>
<rect x="631" y="186.3" width="65.5" height="30.7" rx="1.6" fill="#fff" fill-opacity="0.8" stroke="#d6d6d6" stroke-width="0.7"/>
<circle cx="644" cy="195.4" r="3.0" fill="#ff0000"/><circle cx="644" cy="209.6" r="3.0" fill="#0000ff"/>
<g font-size="9.3" fill="#222"><text x="660.6" y="198.1">class 0</text><text x="660.6" y="211.8">class 1</text></g>
<text x="626.6" y="257.1" font-size="18.45" fill="#e0222c">Loss=0.1488</text>
</svg>
<div id="wm"><span class="w1">知乎</span><span class="w2"> </span><span class="w3">@</span><span class="w4">鱼子酱</span></div>
</body></html>
